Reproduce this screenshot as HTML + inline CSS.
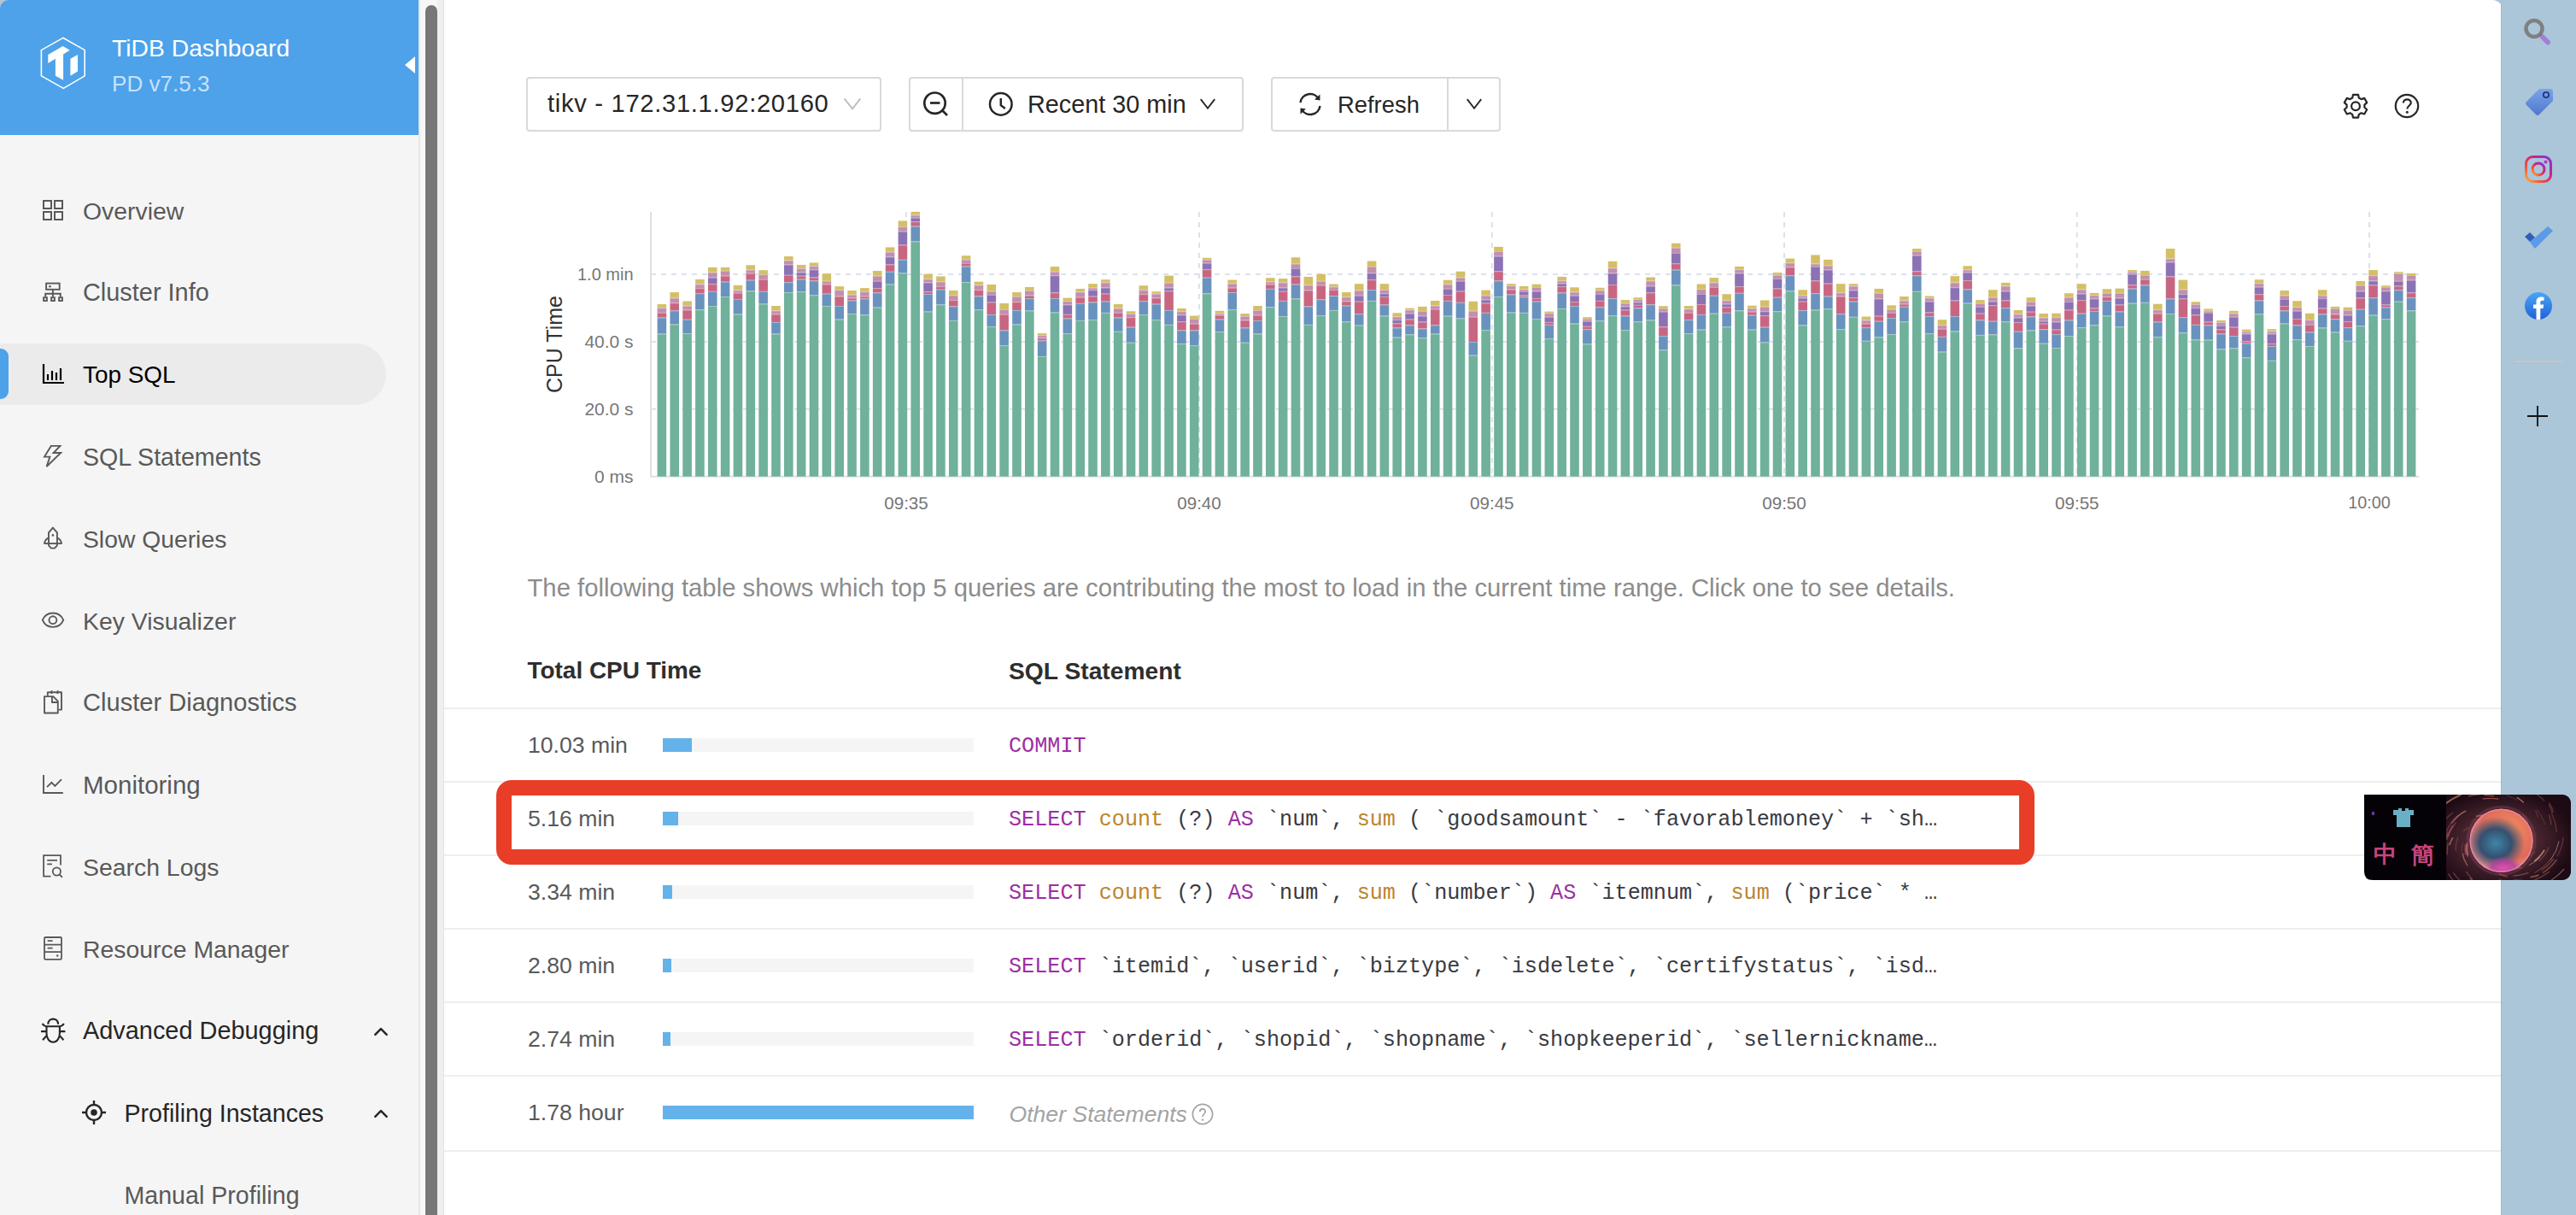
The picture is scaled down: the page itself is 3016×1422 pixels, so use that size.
<!DOCTYPE html><html><head><meta charset="utf-8"><style>
html,body{margin:0;padding:0;}
body{width:3016px;height:1422px;overflow:hidden;position:relative;background:#fff;font-family:'Liberation Sans',sans-serif;}
div{box-sizing:border-box;}
svg{position:absolute;overflow:visible;}
</style></head><body>
<div style="position:absolute;left:0;top:0;width:490px;height:1422px;background:#f5f5f5"></div>
<div style="position:absolute;left:0;top:0;width:490px;height:158px;background:#4da2ea"></div>
<svg style="left:0;top:0" width="12" height="12"><path d="M0 0 H10 A10 10 0 0 0 0 10 Z" fill="#b4c7d6"/></svg>
<div style="position:absolute;left:490px;top:0;width:30px;height:1422px;background:linear-gradient(90deg,#e8e6e4 0,#e8e6e4 1.5px,#f7f7f7 1.5px,#f7f7f7 22px,#efefef 22px,#efefef 29px,#e2e2e2 29px)"></div>
<div style="position:absolute;left:498px;top:6px;width:14px;height:1416px;background:#777;border-radius:7px 7px 0 0"></div>
<div style="position:absolute;left:2928px;top:0;width:88px;height:1422px;background:#abc5d9;border-left:1px solid #9fb8cc"></div>
<svg style="left:2916px;top:0" width="14" height="14"><path d="M2 0 A12 12 0 0 1 14 12 V0 Z" fill="#abc5d9"/></svg>
<svg style="left:0;top:0" width="120" height="120" viewBox="0 0 120 120">
<path d="M73.8 44.3 L99.2 58.6 V88.9 L74.3 103.4 L48.4 88.9 V58.6 Z" fill="none" stroke="#fff" stroke-width="1.6"/>
<path d="M56.3 64.1 L73.6 54 L81.8 58.7 L74.1 63.5 L74.1 93.7 L64.9 88.7 L64.9 68.8 L56.3 73.9 Z" fill="#fff"/>
<path d="M82.4 68.8 L91 64.1 L91 83.6 L82.4 88.7 Z" fill="#fff"/>
</svg>
<div style="position:absolute;left:131.0px;top:42.2px;font-family:'Liberation Sans', sans-serif;font-size:28.3px;line-height:1;color:#fff;font-weight:400;white-space:pre;">TiDB Dashboard</div>
<div style="position:absolute;left:131.0px;top:84.8px;font-family:'Liberation Sans', sans-serif;font-size:26.1px;line-height:1;color:rgba(255,255,255,0.7);font-weight:400;white-space:pre;">PD v7.5.3</div>
<svg style="left:472px;top:65px" width="16" height="22"><path d="M2 11 L14 1 V21 Z" fill="#fff"/></svg>
<div style="position:absolute;left:0;top:402px;width:452px;height:72px;background:#ebebeb;border-radius:0 36px 36px 0"></div>
<div style="position:absolute;left:0;top:408px;width:10px;height:59px;background:#4da2ea;border-radius:0 9px 9px 0"></div>
<div style="position:absolute;left:97.0px;top:232.7px;font-family:'Liberation Sans', sans-serif;font-size:28.4px;line-height:1;color:#595959;font-weight:400;white-space:pre;">Overview</div>
<div style="position:absolute;left:97.0px;top:328.2px;font-family:'Liberation Sans', sans-serif;font-size:28.9px;line-height:1;color:#595959;font-weight:400;white-space:pre;">Cluster Info</div>
<div style="position:absolute;left:97.0px;top:425.1px;font-family:'Liberation Sans', sans-serif;font-size:27.9px;line-height:1;color:#000;font-weight:400;white-space:pre;">Top SQL</div>
<div style="position:absolute;left:97.0px;top:520.5px;font-family:'Liberation Sans', sans-serif;font-size:28.6px;line-height:1;color:#595959;font-weight:400;white-space:pre;">SQL Statements</div>
<div style="position:absolute;left:97.0px;top:616.7px;font-family:'Liberation Sans', sans-serif;font-size:28.3px;line-height:1;color:#595959;font-weight:400;white-space:pre;">Slow Queries</div>
<div style="position:absolute;left:97.0px;top:712.7px;font-family:'Liberation Sans', sans-serif;font-size:28.4px;line-height:1;color:#595959;font-weight:400;white-space:pre;">Key Visualizer</div>
<div style="position:absolute;left:97.0px;top:808.1px;font-family:'Liberation Sans', sans-serif;font-size:29.1px;line-height:1;color:#595959;font-weight:400;white-space:pre;">Cluster Diagnostics</div>
<div style="position:absolute;left:97.0px;top:903.7px;font-family:'Liberation Sans', sans-serif;font-size:29.5px;line-height:1;color:#595959;font-weight:400;white-space:pre;">Monitoring</div>
<div style="position:absolute;left:97.0px;top:1000.7px;font-family:'Liberation Sans', sans-serif;font-size:28.4px;line-height:1;color:#595959;font-weight:400;white-space:pre;">Search Logs</div>
<div style="position:absolute;left:97.0px;top:1096.7px;font-family:'Liberation Sans', sans-serif;font-size:28.4px;line-height:1;color:#595959;font-weight:400;white-space:pre;">Resource Manager</div>
<div style="position:absolute;left:97.0px;top:1192.2px;font-family:'Liberation Sans', sans-serif;font-size:28.9px;line-height:1;color:#262626;font-weight:400;white-space:pre;">Advanced Debugging</div>
<div style="position:absolute;left:145.5px;top:1288.5px;font-family:'Liberation Sans', sans-serif;font-size:28.6px;line-height:1;color:#262626;font-weight:400;white-space:pre;">Profiling Instances</div>
<div style="position:absolute;left:145.5px;top:1384.5px;font-family:'Liberation Sans', sans-serif;font-size:28.6px;line-height:1;color:#595959;font-weight:400;white-space:pre;">Manual Profiling</div>
<svg style="left:436px;top:1200px" width="20" height="14"><path d="M3.3 10.8 L10 4.1 L16.7 10.8" fill="none" stroke="#262626" stroke-width="2.5" stroke-linecap="round" stroke-linejoin="round"/></svg>
<svg style="left:436px;top:1296px" width="20" height="14"><path d="M3.3 10.8 L10 4.1 L16.7 10.8" fill="none" stroke="#262626" stroke-width="2.5" stroke-linecap="round" stroke-linejoin="round"/></svg>
<svg style="left:50px;top:234px" width="24" height="24" viewBox="0 0 24 24"><g fill="none" stroke="#595959" stroke-width="2"><rect x="1" y="1" width="9" height="9"/><rect x="14" y="1" width="9" height="9"/><rect x="1" y="14" width="9" height="9"/><rect x="14" y="14" width="9" height="9"/></g></svg>
<svg style="left:0;top:0" width="100" height="400"><g fill="none" stroke="#595959" stroke-width="1.9"><rect x="54.1" y="331.6" width="15.6" height="7.2"/><path d="M61.9 338.8 V347.5 M53.2 347.5 V343.7 H70.8 V347.5"/><rect x="51.1" y="348.2" width="3.8" height="3.8"/><rect x="60.1" y="348.2" width="3.8" height="3.8"/><rect x="69.1" y="348.2" width="3.8" height="3.8"/></g><circle cx="58.5" cy="335.3" r="1.3" fill="#595959"/></svg>
<svg style="left:50px;top:426px" width="25" height="24" viewBox="0 0 25 24"><g fill="none" stroke="#000" stroke-width="2.2"><path d="M1 0 V22 H25"/><path d="M6 12 V19 M11 8 V19 M16 10 V19 M21 5 V19"/></g></svg>
<svg style="left:0;top:0" width="100" height="600"><path d="M59.8 521.9 H70.4 L62.6 530 H71.2 L54.6 546 L58.4 534.6 H52 Z" fill="none" stroke="#595959" stroke-width="1.9" stroke-linejoin="miter"/></svg>
<svg style="left:0;top:0" width="100" height="700"><g fill="none" stroke="#595959" stroke-width="1.9" stroke-linejoin="round"><path d="M57 636 V623.4 L61.9 617.6 L66.9 623.4 V636"/><path d="M51.4 636.1 H72.6"/><path d="M51.8 636 Q53 631.2 57 629.4 M72.2 636 Q71 631.2 66.9 629.4"/><path d="M57.1 636.5 V638.6 L60 641.6 H63.9 L66.8 638.6 V636.5"/></g><circle cx="61.9" cy="626.4" r="1.3" fill="#595959"/></svg>
<svg style="left:0;top:0" width="100" height="800"><g fill="none" stroke="#595959" stroke-width="1.9"><path d="M49.8 725.7 C54.2 714.8 69.8 714.8 74.2 725.7 C69.8 736.6 54.2 736.6 49.8 725.7 Z"/><circle cx="61.9" cy="725.7" r="4.4"/></g></svg>
<svg style="left:0;top:0" width="100" height="900"><g fill="none" stroke="#595959" stroke-width="1.9" stroke-linejoin="round"><path d="M55.8 814.6 V810.2 H72 V830.6 H68.5"/><path d="M52 815.1 H62.3 L67.8 820.7 V834.5 H52 Z"/><path d="M60.9 815.1 V822 H67.8"/><path d="M60.7 808.2 L60.1 812 M67.8 808.2 L67.2 812"/></g></svg>
<svg style="left:0;top:0" width="100" height="1000"><g fill="none" stroke="#595959" stroke-width="1.9"><path d="M51 907 V928 H73.8"/><path d="M55 921.2 L60.4 915.8 L64.4 919.8 L72 912.2"/></g></svg>
<svg style="left:0;top:0" width="100" height="1100"><g fill="none" stroke="#595959" stroke-width="1.8"><path d="M59.5 1025.6 H51.1 V1001.1 H71 V1012.6"/><path d="M55.2 1006.8 H67 M55.2 1011.4 H60.9"/><circle cx="66.4" cy="1020" r="4.6"/><path d="M69.6 1023.3 L72.9 1026.9"/></g></svg>
<svg style="left:0;top:0" width="100" height="1200"><g fill="none" stroke="#595959" stroke-width="1.8"><rect x="52" y="1097" width="20" height="25.8" rx="1.3"/><path d="M52 1105.6 H72 M52 1114.2 H72 M55.6 1101.2 H61.6 M55.6 1109.7 H61.6"/></g><circle cx="67.2" cy="1118.5" r="1.2" fill="#595959"/></svg>
<svg style="left:0;top:0" width="100" height="1250"><g fill="none" stroke="#262626" stroke-width="2.1"><path d="M56.3 1198.8 C56.3 1190.5 68.1 1190.5 68.1 1198.8"/><path d="M49.6 1198 Q51.5 1201.3 55.5 1201.3 H68.9 Q72.9 1201.3 74.8 1198"/><path d="M54.5 1201.3 V1209.5 C54.5 1215.5 58 1219.8 62.2 1219.8 C66.4 1219.8 69.9 1215.5 69.9 1209.5 V1201.3"/><path d="M48 1207.1 H54.5 M69.9 1207.1 H76.4 M50 1217.2 L54.2 1212.4 M74.4 1217.2 L70.2 1212.4"/></g></svg>
<svg style="left:96px;top:1288px" width="28" height="28" viewBox="0 0 28 28"><g fill="none" stroke="#262626" stroke-width="2.4"><circle cx="14" cy="14" r="9"/><path d="M14 0 V5 M14 23 V28 M0 14 H5 M23 14 H28"/></g><circle cx="14" cy="14" r="3.8" fill="#262626"/></svg>
<div style="position:absolute;left:616px;top:90px;width:416px;height:64px;border:2px solid #d9d9d9;border-radius:4px;background:#fff"></div>
<div style="position:absolute;left:641.0px;top:107.2px;font-family:'Liberation Sans', sans-serif;font-size:29.2px;line-height:1;color:#262626;font-weight:400;white-space:pre;letter-spacing:0.68px;">tikv - 172.31.1.92:20160</div>
<svg style="left:987px;top:113px" width="22" height="18"><path d="M1.6 2.4 L11 14.4 L20.4 2.4" fill="none" stroke="#bfbfbf" stroke-width="2"/></svg>
<div style="position:absolute;left:1064px;top:90px;width:392px;height:64px;border:2px solid #d9d9d9;border-radius:4px;background:#fff;box-shadow:0 2px 0 rgba(0,0,0,0.016)"></div>
<div style="position:absolute;left:1126px;top:90px;width:2px;height:64px;background:#d9d9d9"></div>
<svg style="left:1078px;top:104px" width="36" height="36"><g fill="none" stroke="#262626" stroke-width="2.7"><circle cx="16.5" cy="16.7" r="12.2"/><path d="M11 16.5 H22.5"/><path d="M25.5 25.5 L31 31"/></g></svg>
<svg style="left:1156px;top:106px" width="32" height="32"><g fill="none" stroke="#262626" stroke-width="2.5"><circle cx="15.8" cy="15.9" r="12.8"/><path d="M15.8 8.9 V17.2 L20.8 21"/></g></svg>
<div style="position:absolute;left:1203.0px;top:107.5px;font-family:'Liberation Sans', sans-serif;font-size:28.8px;line-height:1;color:#262626;font-weight:400;white-space:pre;">Recent 30 min</div>
<svg style="left:1404px;top:114px" width="20" height="18"><path d="M1.8 2.2 L10 12.8 L18.2 2.2" fill="none" stroke="#262626" stroke-width="1.9"/></svg>
<div style="position:absolute;left:1488px;top:90px;width:269px;height:64px;border:2px solid #d9d9d9;border-radius:4px;background:#fff"></div>
<div style="position:absolute;left:1694px;top:90px;width:2px;height:64px;background:#d9d9d9"></div>
<svg style="left:1518px;top:106px" width="32" height="32"><g fill="none" stroke="#262626" stroke-width="2.5"><path d="M4.5 14 A11.5 11.5 0 0 1 26 10"/><path d="M27.5 18 A11.5 11.5 0 0 1 6 22"/></g><path d="M21 10.5 L27.5 11.5 L27.5 4.5 Z" fill="#262626"/><path d="M11 21.5 L4.5 20.5 L4.5 27.5 Z" fill="#262626"/></svg>
<div style="position:absolute;left:1566.0px;top:108.7px;font-family:'Liberation Sans', sans-serif;font-size:27.4px;line-height:1;color:#262626;font-weight:400;white-space:pre;">Refresh</div>
<svg style="left:1716px;top:114px" width="20" height="18"><path d="M1.8 2.2 L10 12.8 L18.2 2.2" fill="none" stroke="#262626" stroke-width="1.9"/></svg>
<svg style="left:2742px;top:108px" width="32" height="32" viewBox="0 0 32 32"><g fill="none" stroke="#262626" stroke-width="2.2" stroke-linejoin="round">
<path d="M13 2.8 H19 L19.8 6.5 L22.6 8.1 L26.2 6.9 L29.2 12.1 L26.4 14.6 V17.8 L29.2 20.3 L26.2 25.5 L22.6 24.3 L19.8 25.9 L19 29.6 H13 L12.2 25.9 L9.4 24.3 L5.8 25.5 L2.8 20.3 L5.6 17.8 V14.6 L2.8 12.1 L5.8 6.9 L9.4 8.1 L12.2 6.5 Z"/>
<circle cx="16" cy="16.2" r="4.9"/></g></svg>
<svg style="left:2803px;top:109px" width="30" height="30" viewBox="0 0 30 30"><g fill="none" stroke="#262626" stroke-width="2.2">
<circle cx="15" cy="15" r="13.2"/><path d="M10.8 11.5 C10.8 6 19.8 6 19.8 11.3 C19.8 14.5 15.3 15 15.3 18.5"/></g><circle cx="15.3" cy="22.2" r="1.5" fill="#262626"/></svg>
<svg style="left:0;top:0" width="3016" height="620" viewBox="0 0 3016 620"><line x1="762" y1="478.8" x2="2832" y2="478.8" stroke="#dde1ec" stroke-width="2" stroke-dasharray="6 6"/><line x1="762" y1="399.9" x2="2832" y2="399.9" stroke="#dde1ec" stroke-width="2" stroke-dasharray="6 6"/><line x1="762" y1="321.0" x2="2832" y2="321.0" stroke="#dde1ec" stroke-width="2" stroke-dasharray="6 6"/><line x1="1061" y1="248" x2="1061" y2="557.7" stroke="#dde1ec" stroke-width="2" stroke-dasharray="6 6"/><line x1="1404" y1="248" x2="1404" y2="557.7" stroke="#dde1ec" stroke-width="2" stroke-dasharray="6 6"/><line x1="1746.8" y1="248" x2="1746.8" y2="557.7" stroke="#dde1ec" stroke-width="2" stroke-dasharray="6 6"/><line x1="2089" y1="248" x2="2089" y2="557.7" stroke="#dde1ec" stroke-width="2" stroke-dasharray="6 6"/><line x1="2431.8" y1="248" x2="2431.8" y2="557.7" stroke="#dde1ec" stroke-width="2" stroke-dasharray="6 6"/><line x1="2774" y1="248" x2="2774" y2="557.7" stroke="#dde1ec" stroke-width="2" stroke-dasharray="6 6"/><line x1="762" y1="248" x2="762" y2="558.7" stroke="#e0e0e0" stroke-width="2"/><line x1="762" y1="557.7" x2="2832" y2="557.7" stroke="#e0e0e0" stroke-width="2"/><rect x="769.60" y="390.62" width="10.6" height="167.08" fill="#6fb19a"/><rect x="769.60" y="371.69" width="10.6" height="18.93" fill="#6a92be"/><rect x="769.60" y="365.93" width="10.6" height="5.76" fill="#c86682"/><rect x="769.60" y="360.16" width="10.6" height="5.76" fill="#c28fad"/><rect x="769.60" y="356.05" width="10.6" height="4.12" fill="#d3c066"/><rect x="769.60" y="390.62" width="10.6" height="1" fill="rgba(255,255,255,0.35)"/><rect x="769.60" y="371.69" width="10.6" height="1" fill="rgba(255,255,255,0.35)"/><rect x="769.60" y="365.93" width="10.6" height="1" fill="rgba(255,255,255,0.35)"/><rect x="769.60" y="360.16" width="10.6" height="1" fill="rgba(255,255,255,0.35)"/><rect x="784.44" y="379.59" width="10.6" height="178.11" fill="#6fb19a"/><rect x="784.44" y="363.46" width="10.6" height="16.13" fill="#6a92be"/><rect x="784.44" y="354.40" width="10.6" height="9.05" fill="#c86682"/><rect x="784.44" y="348.64" width="10.6" height="5.76" fill="#c28fad"/><rect x="784.44" y="342.06" width="10.6" height="6.58" fill="#d3c066"/><rect x="784.44" y="379.59" width="10.6" height="1" fill="rgba(255,255,255,0.35)"/><rect x="784.44" y="363.46" width="10.6" height="1" fill="rgba(255,255,255,0.35)"/><rect x="784.44" y="354.40" width="10.6" height="1" fill="rgba(255,255,255,0.35)"/><rect x="784.44" y="348.64" width="10.6" height="1" fill="rgba(255,255,255,0.35)"/><rect x="799.28" y="390.12" width="10.6" height="167.58" fill="#6fb19a"/><rect x="799.28" y="373.83" width="10.6" height="16.30" fill="#6a92be"/><rect x="799.28" y="362.63" width="10.6" height="11.19" fill="#c86682"/><rect x="799.28" y="357.70" width="10.6" height="4.94" fill="#c28fad"/><rect x="799.28" y="352.43" width="10.6" height="5.27" fill="#d3c066"/><rect x="799.28" y="390.12" width="10.6" height="1" fill="rgba(255,255,255,0.35)"/><rect x="799.28" y="373.83" width="10.6" height="1" fill="rgba(255,255,255,0.35)"/><rect x="799.28" y="362.63" width="10.6" height="1" fill="rgba(255,255,255,0.35)"/><rect x="799.28" y="357.70" width="10.6" height="1" fill="rgba(255,255,255,0.35)"/><rect x="814.13" y="362.30" width="10.6" height="195.40" fill="#6fb19a"/><rect x="814.13" y="343.21" width="10.6" height="19.09" fill="#6a92be"/><rect x="814.13" y="337.12" width="10.6" height="6.09" fill="#c86682"/><rect x="814.13" y="332.51" width="10.6" height="4.61" fill="#c28fad"/><rect x="814.13" y="326.91" width="10.6" height="5.60" fill="#d3c066"/><rect x="814.13" y="362.30" width="10.6" height="1" fill="rgba(255,255,255,0.35)"/><rect x="814.13" y="343.21" width="10.6" height="1" fill="rgba(255,255,255,0.35)"/><rect x="814.13" y="337.12" width="10.6" height="1" fill="rgba(255,255,255,0.35)"/><rect x="814.13" y="332.51" width="10.6" height="1" fill="rgba(255,255,255,0.35)"/><rect x="828.97" y="358.02" width="10.6" height="199.68" fill="#6fb19a"/><rect x="828.97" y="340.91" width="10.6" height="17.12" fill="#6a92be"/><rect x="828.97" y="332.18" width="10.6" height="8.72" fill="#c86682"/><rect x="828.97" y="324.77" width="10.6" height="7.41" fill="#8b72b4"/><rect x="828.97" y="318.52" width="10.6" height="6.26" fill="#c28fad"/><rect x="828.97" y="312.92" width="10.6" height="5.60" fill="#d3c066"/><rect x="828.97" y="358.02" width="10.6" height="1" fill="rgba(255,255,255,0.35)"/><rect x="828.97" y="340.91" width="10.6" height="1" fill="rgba(255,255,255,0.35)"/><rect x="828.97" y="332.18" width="10.6" height="1" fill="rgba(255,255,255,0.35)"/><rect x="828.97" y="324.77" width="10.6" height="1" fill="rgba(255,255,255,0.35)"/><rect x="828.97" y="318.52" width="10.6" height="1" fill="rgba(255,255,255,0.35)"/><rect x="843.81" y="347.00" width="10.6" height="210.70" fill="#6fb19a"/><rect x="843.81" y="329.71" width="10.6" height="17.28" fill="#6a92be"/><rect x="843.81" y="322.80" width="10.6" height="6.91" fill="#c86682"/><rect x="843.81" y="316.87" width="10.6" height="5.93" fill="#c28fad"/><rect x="843.81" y="312.92" width="10.6" height="3.95" fill="#d3c066"/><rect x="843.81" y="347.00" width="10.6" height="1" fill="rgba(255,255,255,0.35)"/><rect x="843.81" y="329.71" width="10.6" height="1" fill="rgba(255,255,255,0.35)"/><rect x="843.81" y="322.80" width="10.6" height="1" fill="rgba(255,255,255,0.35)"/><rect x="843.81" y="316.87" width="10.6" height="1" fill="rgba(255,255,255,0.35)"/><rect x="858.65" y="367.57" width="10.6" height="190.13" fill="#6fb19a"/><rect x="858.65" y="349.96" width="10.6" height="17.61" fill="#6a92be"/><rect x="858.65" y="342.88" width="10.6" height="7.08" fill="#c86682"/><rect x="858.65" y="339.59" width="10.6" height="3.29" fill="#c28fad"/><rect x="858.65" y="333.83" width="10.6" height="5.76" fill="#d3c066"/><rect x="858.65" y="367.57" width="10.6" height="1" fill="rgba(255,255,255,0.35)"/><rect x="858.65" y="349.96" width="10.6" height="1" fill="rgba(255,255,255,0.35)"/><rect x="858.65" y="342.88" width="10.6" height="1" fill="rgba(255,255,255,0.35)"/><rect x="858.65" y="339.59" width="10.6" height="1" fill="rgba(255,255,255,0.35)"/><rect x="873.49" y="340.41" width="10.6" height="217.29" fill="#6fb19a"/><rect x="873.49" y="327.74" width="10.6" height="12.67" fill="#6a92be"/><rect x="873.49" y="319.84" width="10.6" height="7.90" fill="#c86682"/><rect x="873.49" y="315.72" width="10.6" height="4.12" fill="#c28fad"/><rect x="873.49" y="310.29" width="10.6" height="5.43" fill="#d3c066"/><rect x="873.49" y="340.41" width="10.6" height="1" fill="rgba(255,255,255,0.35)"/><rect x="873.49" y="327.74" width="10.6" height="1" fill="rgba(255,255,255,0.35)"/><rect x="873.49" y="319.84" width="10.6" height="1" fill="rgba(255,255,255,0.35)"/><rect x="873.49" y="315.72" width="10.6" height="1" fill="rgba(255,255,255,0.35)"/><rect x="888.34" y="355.56" width="10.6" height="202.14" fill="#6fb19a"/><rect x="888.34" y="340.91" width="10.6" height="14.65" fill="#6a92be"/><rect x="888.34" y="326.91" width="10.6" height="13.99" fill="#c86682"/><rect x="888.34" y="321.15" width="10.6" height="5.76" fill="#c28fad"/><rect x="888.34" y="316.21" width="10.6" height="4.94" fill="#d3c066"/><rect x="888.34" y="355.56" width="10.6" height="1" fill="rgba(255,255,255,0.35)"/><rect x="888.34" y="340.91" width="10.6" height="1" fill="rgba(255,255,255,0.35)"/><rect x="888.34" y="326.91" width="10.6" height="1" fill="rgba(255,255,255,0.35)"/><rect x="888.34" y="321.15" width="10.6" height="1" fill="rgba(255,255,255,0.35)"/><rect x="903.18" y="390.62" width="10.6" height="167.08" fill="#6fb19a"/><rect x="903.18" y="376.95" width="10.6" height="13.66" fill="#6a92be"/><rect x="903.18" y="367.57" width="10.6" height="9.38" fill="#c86682"/><rect x="903.18" y="363.46" width="10.6" height="4.12" fill="#c28fad"/><rect x="903.18" y="358.02" width="10.6" height="5.43" fill="#d3c066"/><rect x="903.18" y="390.62" width="10.6" height="1" fill="rgba(255,255,255,0.35)"/><rect x="903.18" y="376.95" width="10.6" height="1" fill="rgba(255,255,255,0.35)"/><rect x="903.18" y="367.57" width="10.6" height="1" fill="rgba(255,255,255,0.35)"/><rect x="903.18" y="363.46" width="10.6" height="1" fill="rgba(255,255,255,0.35)"/><rect x="918.02" y="342.06" width="10.6" height="215.64" fill="#6fb19a"/><rect x="918.02" y="330.21" width="10.6" height="11.85" fill="#6a92be"/><rect x="918.02" y="321.81" width="10.6" height="8.40" fill="#c86682"/><rect x="918.02" y="309.63" width="10.6" height="12.18" fill="#8b72b4"/><rect x="918.02" y="304.69" width="10.6" height="4.94" fill="#c28fad"/><rect x="918.02" y="300.08" width="10.6" height="4.61" fill="#d3c066"/><rect x="918.02" y="342.06" width="10.6" height="1" fill="rgba(255,255,255,0.35)"/><rect x="918.02" y="330.21" width="10.6" height="1" fill="rgba(255,255,255,0.35)"/><rect x="918.02" y="321.81" width="10.6" height="1" fill="rgba(255,255,255,0.35)"/><rect x="918.02" y="309.63" width="10.6" height="1" fill="rgba(255,255,255,0.35)"/><rect x="918.02" y="304.69" width="10.6" height="1" fill="rgba(255,255,255,0.35)"/><rect x="932.86" y="341.23" width="10.6" height="216.47" fill="#6fb19a"/><rect x="932.86" y="326.75" width="10.6" height="14.49" fill="#6a92be"/><rect x="932.86" y="322.80" width="10.6" height="3.95" fill="#c86682"/><rect x="932.86" y="318.52" width="10.6" height="4.28" fill="#8b72b4"/><rect x="932.86" y="314.07" width="10.6" height="4.44" fill="#c28fad"/><rect x="932.86" y="309.96" width="10.6" height="4.12" fill="#d3c066"/><rect x="932.86" y="341.23" width="10.6" height="1" fill="rgba(255,255,255,0.35)"/><rect x="932.86" y="326.75" width="10.6" height="1" fill="rgba(255,255,255,0.35)"/><rect x="932.86" y="322.80" width="10.6" height="1" fill="rgba(255,255,255,0.35)"/><rect x="932.86" y="318.52" width="10.6" height="1" fill="rgba(255,255,255,0.35)"/><rect x="932.86" y="314.07" width="10.6" height="1" fill="rgba(255,255,255,0.35)"/><rect x="947.70" y="345.35" width="10.6" height="212.35" fill="#6fb19a"/><rect x="947.70" y="328.40" width="10.6" height="16.95" fill="#6a92be"/><rect x="947.70" y="324.44" width="10.6" height="3.95" fill="#c86682"/><rect x="947.70" y="315.39" width="10.6" height="9.05" fill="#8b72b4"/><rect x="947.70" y="311.28" width="10.6" height="4.12" fill="#c28fad"/><rect x="947.70" y="307.49" width="10.6" height="3.79" fill="#d3c066"/><rect x="947.70" y="345.35" width="10.6" height="1" fill="rgba(255,255,255,0.35)"/><rect x="947.70" y="328.40" width="10.6" height="1" fill="rgba(255,255,255,0.35)"/><rect x="947.70" y="324.44" width="10.6" height="1" fill="rgba(255,255,255,0.35)"/><rect x="947.70" y="315.39" width="10.6" height="1" fill="rgba(255,255,255,0.35)"/><rect x="947.70" y="311.28" width="10.6" height="1" fill="rgba(255,255,255,0.35)"/><rect x="962.55" y="358.02" width="10.6" height="199.68" fill="#6fb19a"/><rect x="962.55" y="343.70" width="10.6" height="14.32" fill="#6a92be"/><rect x="962.55" y="332.51" width="10.6" height="11.19" fill="#c86682"/><rect x="962.55" y="328.89" width="10.6" height="3.62" fill="#c28fad"/><rect x="962.55" y="320.16" width="10.6" height="8.72" fill="#d3c066"/><rect x="962.55" y="358.02" width="10.6" height="1" fill="rgba(255,255,255,0.35)"/><rect x="962.55" y="343.70" width="10.6" height="1" fill="rgba(255,255,255,0.35)"/><rect x="962.55" y="332.51" width="10.6" height="1" fill="rgba(255,255,255,0.35)"/><rect x="962.55" y="328.89" width="10.6" height="1" fill="rgba(255,255,255,0.35)"/><rect x="977.39" y="373.66" width="10.6" height="184.04" fill="#6fb19a"/><rect x="977.39" y="358.02" width="10.6" height="15.64" fill="#6a92be"/><rect x="977.39" y="346.67" width="10.6" height="11.36" fill="#c86682"/><rect x="977.39" y="339.26" width="10.6" height="7.41" fill="#c28fad"/><rect x="977.39" y="335.14" width="10.6" height="4.12" fill="#d3c066"/><rect x="977.39" y="373.66" width="10.6" height="1" fill="rgba(255,255,255,0.35)"/><rect x="977.39" y="358.02" width="10.6" height="1" fill="rgba(255,255,255,0.35)"/><rect x="977.39" y="346.67" width="10.6" height="1" fill="rgba(255,255,255,0.35)"/><rect x="977.39" y="339.26" width="10.6" height="1" fill="rgba(255,255,255,0.35)"/><rect x="992.23" y="367.08" width="10.6" height="190.62" fill="#6fb19a"/><rect x="992.23" y="351.60" width="10.6" height="15.47" fill="#6a92be"/><rect x="992.23" y="348.64" width="10.6" height="2.96" fill="#c86682"/><rect x="992.23" y="344.86" width="10.6" height="3.79" fill="#c28fad"/><rect x="992.23" y="340.08" width="10.6" height="4.77" fill="#d3c066"/><rect x="992.23" y="367.08" width="10.6" height="1" fill="rgba(255,255,255,0.35)"/><rect x="992.23" y="351.60" width="10.6" height="1" fill="rgba(255,255,255,0.35)"/><rect x="992.23" y="348.64" width="10.6" height="1" fill="rgba(255,255,255,0.35)"/><rect x="992.23" y="344.86" width="10.6" height="1" fill="rgba(255,255,255,0.35)"/><rect x="1007.07" y="368.40" width="10.6" height="189.30" fill="#6fb19a"/><rect x="1007.07" y="349.47" width="10.6" height="18.93" fill="#6a92be"/><rect x="1007.07" y="346.67" width="10.6" height="2.80" fill="#c86682"/><rect x="1007.07" y="341.23" width="10.6" height="5.43" fill="#c28fad"/><rect x="1007.07" y="337.12" width="10.6" height="4.12" fill="#d3c066"/><rect x="1007.07" y="368.40" width="10.6" height="1" fill="rgba(255,255,255,0.35)"/><rect x="1007.07" y="349.47" width="10.6" height="1" fill="rgba(255,255,255,0.35)"/><rect x="1007.07" y="346.67" width="10.6" height="1" fill="rgba(255,255,255,0.35)"/><rect x="1007.07" y="341.23" width="10.6" height="1" fill="rgba(255,255,255,0.35)"/><rect x="1021.91" y="359.67" width="10.6" height="198.03" fill="#6fb19a"/><rect x="1021.91" y="342.39" width="10.6" height="17.28" fill="#6a92be"/><rect x="1021.91" y="337.12" width="10.6" height="5.27" fill="#c86682"/><rect x="1021.91" y="328.89" width="10.6" height="8.23" fill="#8b72b4"/><rect x="1021.91" y="322.80" width="10.6" height="6.09" fill="#c28fad"/><rect x="1021.91" y="317.04" width="10.6" height="5.76" fill="#d3c066"/><rect x="1021.91" y="359.67" width="10.6" height="1" fill="rgba(255,255,255,0.35)"/><rect x="1021.91" y="342.39" width="10.6" height="1" fill="rgba(255,255,255,0.35)"/><rect x="1021.91" y="337.12" width="10.6" height="1" fill="rgba(255,255,255,0.35)"/><rect x="1021.91" y="328.89" width="10.6" height="1" fill="rgba(255,255,255,0.35)"/><rect x="1021.91" y="322.80" width="10.6" height="1" fill="rgba(255,255,255,0.35)"/><rect x="1036.76" y="332.67" width="10.6" height="225.03" fill="#6fb19a"/><rect x="1036.76" y="317.86" width="10.6" height="14.81" fill="#6a92be"/><rect x="1036.76" y="309.47" width="10.6" height="8.40" fill="#c86682"/><rect x="1036.76" y="300.41" width="10.6" height="9.05" fill="#8b72b4"/><rect x="1036.76" y="294.81" width="10.6" height="5.60" fill="#c28fad"/><rect x="1036.76" y="289.38" width="10.6" height="5.43" fill="#d3c066"/><rect x="1036.76" y="332.67" width="10.6" height="1" fill="rgba(255,255,255,0.35)"/><rect x="1036.76" y="317.86" width="10.6" height="1" fill="rgba(255,255,255,0.35)"/><rect x="1036.76" y="309.47" width="10.6" height="1" fill="rgba(255,255,255,0.35)"/><rect x="1036.76" y="300.41" width="10.6" height="1" fill="rgba(255,255,255,0.35)"/><rect x="1036.76" y="294.81" width="10.6" height="1" fill="rgba(255,255,255,0.35)"/><rect x="1051.60" y="319.51" width="10.6" height="238.19" fill="#6fb19a"/><rect x="1051.60" y="303.87" width="10.6" height="15.64" fill="#6a92be"/><rect x="1051.60" y="286.58" width="10.6" height="17.28" fill="#c86682"/><rect x="1051.60" y="270.78" width="10.6" height="15.80" fill="#8b72b4"/><rect x="1051.60" y="265.19" width="10.6" height="5.60" fill="#c28fad"/><rect x="1051.60" y="258.44" width="10.6" height="6.75" fill="#d3c066"/><rect x="1051.60" y="319.51" width="10.6" height="1" fill="rgba(255,255,255,0.35)"/><rect x="1051.60" y="303.87" width="10.6" height="1" fill="rgba(255,255,255,0.35)"/><rect x="1051.60" y="286.58" width="10.6" height="1" fill="rgba(255,255,255,0.35)"/><rect x="1051.60" y="270.78" width="10.6" height="1" fill="rgba(255,255,255,0.35)"/><rect x="1051.60" y="265.19" width="10.6" height="1" fill="rgba(255,255,255,0.35)"/><rect x="1066.44" y="282.47" width="10.6" height="275.23" fill="#6fb19a"/><rect x="1066.44" y="264.69" width="10.6" height="17.78" fill="#6a92be"/><rect x="1066.44" y="259.26" width="10.6" height="5.43" fill="#c86682"/><rect x="1066.44" y="254.81" width="10.6" height="4.44" fill="#8b72b4"/><rect x="1066.44" y="251.52" width="10.6" height="3.29" fill="#c28fad"/><rect x="1066.44" y="247.90" width="10.6" height="3.62" fill="#d3c066"/><rect x="1066.44" y="282.47" width="10.6" height="1" fill="rgba(255,255,255,0.35)"/><rect x="1066.44" y="264.69" width="10.6" height="1" fill="rgba(255,255,255,0.35)"/><rect x="1066.44" y="259.26" width="10.6" height="1" fill="rgba(255,255,255,0.35)"/><rect x="1066.44" y="254.81" width="10.6" height="1" fill="rgba(255,255,255,0.35)"/><rect x="1066.44" y="251.52" width="10.6" height="1" fill="rgba(255,255,255,0.35)"/><rect x="1081.28" y="364.61" width="10.6" height="193.09" fill="#6fb19a"/><rect x="1081.28" y="344.03" width="10.6" height="20.58" fill="#6a92be"/><rect x="1081.28" y="341.23" width="10.6" height="2.80" fill="#c86682"/><rect x="1081.28" y="330.53" width="10.6" height="10.70" fill="#8b72b4"/><rect x="1081.28" y="326.42" width="10.6" height="4.12" fill="#c28fad"/><rect x="1081.28" y="320.66" width="10.6" height="5.76" fill="#d3c066"/><rect x="1081.28" y="364.61" width="10.6" height="1" fill="rgba(255,255,255,0.35)"/><rect x="1081.28" y="344.03" width="10.6" height="1" fill="rgba(255,255,255,0.35)"/><rect x="1081.28" y="341.23" width="10.6" height="1" fill="rgba(255,255,255,0.35)"/><rect x="1081.28" y="330.53" width="10.6" height="1" fill="rgba(255,255,255,0.35)"/><rect x="1081.28" y="326.42" width="10.6" height="1" fill="rgba(255,255,255,0.35)"/><rect x="1096.12" y="356.38" width="10.6" height="201.32" fill="#6fb19a"/><rect x="1096.12" y="338.77" width="10.6" height="17.61" fill="#6a92be"/><rect x="1096.12" y="335.14" width="10.6" height="3.62" fill="#c86682"/><rect x="1096.12" y="329.38" width="10.6" height="5.76" fill="#c28fad"/><rect x="1096.12" y="323.46" width="10.6" height="5.93" fill="#d3c066"/><rect x="1096.12" y="356.38" width="10.6" height="1" fill="rgba(255,255,255,0.35)"/><rect x="1096.12" y="338.77" width="10.6" height="1" fill="rgba(255,255,255,0.35)"/><rect x="1096.12" y="335.14" width="10.6" height="1" fill="rgba(255,255,255,0.35)"/><rect x="1096.12" y="329.38" width="10.6" height="1" fill="rgba(255,255,255,0.35)"/><rect x="1110.97" y="374.98" width="10.6" height="182.72" fill="#6fb19a"/><rect x="1110.97" y="358.52" width="10.6" height="16.46" fill="#6a92be"/><rect x="1110.97" y="351.11" width="10.6" height="7.41" fill="#c86682"/><rect x="1110.97" y="345.35" width="10.6" height="5.76" fill="#c28fad"/><rect x="1110.97" y="339.92" width="10.6" height="5.43" fill="#d3c066"/><rect x="1110.97" y="374.98" width="10.6" height="1" fill="rgba(255,255,255,0.35)"/><rect x="1110.97" y="358.52" width="10.6" height="1" fill="rgba(255,255,255,0.35)"/><rect x="1110.97" y="351.11" width="10.6" height="1" fill="rgba(255,255,255,0.35)"/><rect x="1110.97" y="345.35" width="10.6" height="1" fill="rgba(255,255,255,0.35)"/><rect x="1125.81" y="330.21" width="10.6" height="227.49" fill="#6fb19a"/><rect x="1125.81" y="311.60" width="10.6" height="18.60" fill="#6a92be"/><rect x="1125.81" y="307.98" width="10.6" height="3.62" fill="#c86682"/><rect x="1125.81" y="303.87" width="10.6" height="4.12" fill="#c28fad"/><rect x="1125.81" y="299.26" width="10.6" height="4.61" fill="#d3c066"/><rect x="1125.81" y="330.21" width="10.6" height="1" fill="rgba(255,255,255,0.35)"/><rect x="1125.81" y="311.60" width="10.6" height="1" fill="rgba(255,255,255,0.35)"/><rect x="1125.81" y="307.98" width="10.6" height="1" fill="rgba(255,255,255,0.35)"/><rect x="1125.81" y="303.87" width="10.6" height="1" fill="rgba(255,255,255,0.35)"/><rect x="1140.65" y="362.30" width="10.6" height="195.40" fill="#6fb19a"/><rect x="1140.65" y="346.50" width="10.6" height="15.80" fill="#6a92be"/><rect x="1140.65" y="339.26" width="10.6" height="7.24" fill="#c86682"/><rect x="1140.65" y="333.50" width="10.6" height="5.76" fill="#c28fad"/><rect x="1140.65" y="329.71" width="10.6" height="3.79" fill="#d3c066"/><rect x="1140.65" y="362.30" width="10.6" height="1" fill="rgba(255,255,255,0.35)"/><rect x="1140.65" y="346.50" width="10.6" height="1" fill="rgba(255,255,255,0.35)"/><rect x="1140.65" y="339.26" width="10.6" height="1" fill="rgba(255,255,255,0.35)"/><rect x="1140.65" y="333.50" width="10.6" height="1" fill="rgba(255,255,255,0.35)"/><rect x="1155.49" y="382.06" width="10.6" height="175.64" fill="#6fb19a"/><rect x="1155.49" y="368.07" width="10.6" height="13.99" fill="#6a92be"/><rect x="1155.49" y="353.58" width="10.6" height="14.49" fill="#c86682"/><rect x="1155.49" y="345.02" width="10.6" height="8.56" fill="#8b72b4"/><rect x="1155.49" y="340.74" width="10.6" height="4.28" fill="#c28fad"/><rect x="1155.49" y="333.00" width="10.6" height="7.74" fill="#d3c066"/><rect x="1155.49" y="382.06" width="10.6" height="1" fill="rgba(255,255,255,0.35)"/><rect x="1155.49" y="368.07" width="10.6" height="1" fill="rgba(255,255,255,0.35)"/><rect x="1155.49" y="353.58" width="10.6" height="1" fill="rgba(255,255,255,0.35)"/><rect x="1155.49" y="345.02" width="10.6" height="1" fill="rgba(255,255,255,0.35)"/><rect x="1155.49" y="340.74" width="10.6" height="1" fill="rgba(255,255,255,0.35)"/><rect x="1170.33" y="404.12" width="10.6" height="153.58" fill="#6fb19a"/><rect x="1170.33" y="386.50" width="10.6" height="17.61" fill="#6a92be"/><rect x="1170.33" y="367.90" width="10.6" height="18.60" fill="#c86682"/><rect x="1170.33" y="362.14" width="10.6" height="5.76" fill="#c28fad"/><rect x="1170.33" y="354.90" width="10.6" height="7.24" fill="#d3c066"/><rect x="1170.33" y="404.12" width="10.6" height="1" fill="rgba(255,255,255,0.35)"/><rect x="1170.33" y="386.50" width="10.6" height="1" fill="rgba(255,255,255,0.35)"/><rect x="1170.33" y="367.90" width="10.6" height="1" fill="rgba(255,255,255,0.35)"/><rect x="1170.33" y="362.14" width="10.6" height="1" fill="rgba(255,255,255,0.35)"/><rect x="1185.18" y="379.59" width="10.6" height="178.11" fill="#6fb19a"/><rect x="1185.18" y="362.96" width="10.6" height="16.63" fill="#6a92be"/><rect x="1185.18" y="353.25" width="10.6" height="9.71" fill="#c86682"/><rect x="1185.18" y="347.00" width="10.6" height="6.26" fill="#c28fad"/><rect x="1185.18" y="342.06" width="10.6" height="4.94" fill="#d3c066"/><rect x="1185.18" y="379.59" width="10.6" height="1" fill="rgba(255,255,255,0.35)"/><rect x="1185.18" y="362.96" width="10.6" height="1" fill="rgba(255,255,255,0.35)"/><rect x="1185.18" y="353.25" width="10.6" height="1" fill="rgba(255,255,255,0.35)"/><rect x="1185.18" y="347.00" width="10.6" height="1" fill="rgba(255,255,255,0.35)"/><rect x="1200.02" y="363.46" width="10.6" height="194.24" fill="#6fb19a"/><rect x="1200.02" y="349.14" width="10.6" height="14.32" fill="#6a92be"/><rect x="1200.02" y="345.68" width="10.6" height="3.46" fill="#c86682"/><rect x="1200.02" y="339.92" width="10.6" height="5.76" fill="#c28fad"/><rect x="1200.02" y="335.97" width="10.6" height="3.95" fill="#d3c066"/><rect x="1200.02" y="363.46" width="10.6" height="1" fill="rgba(255,255,255,0.35)"/><rect x="1200.02" y="349.14" width="10.6" height="1" fill="rgba(255,255,255,0.35)"/><rect x="1200.02" y="345.68" width="10.6" height="1" fill="rgba(255,255,255,0.35)"/><rect x="1200.02" y="339.92" width="10.6" height="1" fill="rgba(255,255,255,0.35)"/><rect x="1214.86" y="416.95" width="10.6" height="140.75" fill="#6fb19a"/><rect x="1214.86" y="398.52" width="10.6" height="18.44" fill="#6a92be"/><rect x="1214.86" y="395.56" width="10.6" height="2.96" fill="#c86682"/><rect x="1214.86" y="392.26" width="10.6" height="3.29" fill="#c28fad"/><rect x="1214.86" y="390.12" width="10.6" height="2.14" fill="#d3c066"/><rect x="1214.86" y="416.95" width="10.6" height="1" fill="rgba(255,255,255,0.35)"/><rect x="1214.86" y="398.52" width="10.6" height="1" fill="rgba(255,255,255,0.35)"/><rect x="1214.86" y="395.56" width="10.6" height="1" fill="rgba(255,255,255,0.35)"/><rect x="1214.86" y="392.26" width="10.6" height="1" fill="rgba(255,255,255,0.35)"/><rect x="1229.70" y="365.60" width="10.6" height="192.10" fill="#6fb19a"/><rect x="1229.70" y="348.97" width="10.6" height="16.63" fill="#6a92be"/><rect x="1229.70" y="342.39" width="10.6" height="6.58" fill="#c86682"/><rect x="1229.70" y="322.30" width="10.6" height="20.08" fill="#8b72b4"/><rect x="1229.70" y="317.86" width="10.6" height="4.44" fill="#c28fad"/><rect x="1229.70" y="312.10" width="10.6" height="5.76" fill="#d3c066"/><rect x="1229.70" y="365.60" width="10.6" height="1" fill="rgba(255,255,255,0.35)"/><rect x="1229.70" y="348.97" width="10.6" height="1" fill="rgba(255,255,255,0.35)"/><rect x="1229.70" y="342.39" width="10.6" height="1" fill="rgba(255,255,255,0.35)"/><rect x="1229.70" y="322.30" width="10.6" height="1" fill="rgba(255,255,255,0.35)"/><rect x="1229.70" y="317.86" width="10.6" height="1" fill="rgba(255,255,255,0.35)"/><rect x="1244.54" y="390.12" width="10.6" height="167.58" fill="#6fb19a"/><rect x="1244.54" y="372.51" width="10.6" height="17.61" fill="#6a92be"/><rect x="1244.54" y="367.90" width="10.6" height="4.61" fill="#c86682"/><rect x="1244.54" y="356.54" width="10.6" height="11.36" fill="#8b72b4"/><rect x="1244.54" y="352.26" width="10.6" height="4.28" fill="#c28fad"/><rect x="1244.54" y="348.64" width="10.6" height="3.62" fill="#d3c066"/><rect x="1244.54" y="390.12" width="10.6" height="1" fill="rgba(255,255,255,0.35)"/><rect x="1244.54" y="372.51" width="10.6" height="1" fill="rgba(255,255,255,0.35)"/><rect x="1244.54" y="367.90" width="10.6" height="1" fill="rgba(255,255,255,0.35)"/><rect x="1244.54" y="356.54" width="10.6" height="1" fill="rgba(255,255,255,0.35)"/><rect x="1244.54" y="352.26" width="10.6" height="1" fill="rgba(255,255,255,0.35)"/><rect x="1259.39" y="374.98" width="10.6" height="182.72" fill="#6fb19a"/><rect x="1259.39" y="354.90" width="10.6" height="20.08" fill="#6a92be"/><rect x="1259.39" y="347.82" width="10.6" height="7.08" fill="#c86682"/><rect x="1259.39" y="341.56" width="10.6" height="6.26" fill="#c28fad"/><rect x="1259.39" y="337.94" width="10.6" height="3.62" fill="#d3c066"/><rect x="1259.39" y="374.98" width="10.6" height="1" fill="rgba(255,255,255,0.35)"/><rect x="1259.39" y="354.90" width="10.6" height="1" fill="rgba(255,255,255,0.35)"/><rect x="1259.39" y="347.82" width="10.6" height="1" fill="rgba(255,255,255,0.35)"/><rect x="1259.39" y="341.56" width="10.6" height="1" fill="rgba(255,255,255,0.35)"/><rect x="1274.23" y="374.16" width="10.6" height="183.54" fill="#6fb19a"/><rect x="1274.23" y="353.58" width="10.6" height="20.58" fill="#6a92be"/><rect x="1274.23" y="346.67" width="10.6" height="6.91" fill="#c86682"/><rect x="1274.23" y="339.26" width="10.6" height="7.41" fill="#8b72b4"/><rect x="1274.23" y="336.79" width="10.6" height="2.47" fill="#c28fad"/><rect x="1274.23" y="332.18" width="10.6" height="4.61" fill="#d3c066"/><rect x="1274.23" y="374.16" width="10.6" height="1" fill="rgba(255,255,255,0.35)"/><rect x="1274.23" y="353.58" width="10.6" height="1" fill="rgba(255,255,255,0.35)"/><rect x="1274.23" y="346.67" width="10.6" height="1" fill="rgba(255,255,255,0.35)"/><rect x="1274.23" y="339.26" width="10.6" height="1" fill="rgba(255,255,255,0.35)"/><rect x="1274.23" y="336.79" width="10.6" height="1" fill="rgba(255,255,255,0.35)"/><rect x="1289.07" y="365.93" width="10.6" height="191.77" fill="#6fb19a"/><rect x="1289.07" y="352.76" width="10.6" height="13.17" fill="#6a92be"/><rect x="1289.07" y="343.70" width="10.6" height="9.05" fill="#c86682"/><rect x="1289.07" y="336.63" width="10.6" height="7.08" fill="#8b72b4"/><rect x="1289.07" y="330.53" width="10.6" height="6.09" fill="#c28fad"/><rect x="1289.07" y="327.24" width="10.6" height="3.29" fill="#d3c066"/><rect x="1289.07" y="365.93" width="10.6" height="1" fill="rgba(255,255,255,0.35)"/><rect x="1289.07" y="352.76" width="10.6" height="1" fill="rgba(255,255,255,0.35)"/><rect x="1289.07" y="343.70" width="10.6" height="1" fill="rgba(255,255,255,0.35)"/><rect x="1289.07" y="336.63" width="10.6" height="1" fill="rgba(255,255,255,0.35)"/><rect x="1289.07" y="330.53" width="10.6" height="1" fill="rgba(255,255,255,0.35)"/><rect x="1303.91" y="387.82" width="10.6" height="169.88" fill="#6fb19a"/><rect x="1303.91" y="371.69" width="10.6" height="16.13" fill="#6a92be"/><rect x="1303.91" y="365.93" width="10.6" height="5.76" fill="#c86682"/><rect x="1303.91" y="360.66" width="10.6" height="5.27" fill="#c28fad"/><rect x="1303.91" y="356.05" width="10.6" height="4.61" fill="#d3c066"/><rect x="1303.91" y="387.82" width="10.6" height="1" fill="rgba(255,255,255,0.35)"/><rect x="1303.91" y="371.69" width="10.6" height="1" fill="rgba(255,255,255,0.35)"/><rect x="1303.91" y="365.93" width="10.6" height="1" fill="rgba(255,255,255,0.35)"/><rect x="1303.91" y="360.66" width="10.6" height="1" fill="rgba(255,255,255,0.35)"/><rect x="1318.75" y="400.82" width="10.6" height="156.88" fill="#6fb19a"/><rect x="1318.75" y="382.72" width="10.6" height="18.11" fill="#6a92be"/><rect x="1318.75" y="371.19" width="10.6" height="11.52" fill="#c86682"/><rect x="1318.75" y="367.08" width="10.6" height="4.12" fill="#c28fad"/><rect x="1318.75" y="364.28" width="10.6" height="2.80" fill="#d3c066"/><rect x="1318.75" y="400.82" width="10.6" height="1" fill="rgba(255,255,255,0.35)"/><rect x="1318.75" y="382.72" width="10.6" height="1" fill="rgba(255,255,255,0.35)"/><rect x="1318.75" y="371.19" width="10.6" height="1" fill="rgba(255,255,255,0.35)"/><rect x="1318.75" y="367.08" width="10.6" height="1" fill="rgba(255,255,255,0.35)"/><rect x="1333.60" y="368.07" width="10.6" height="189.63" fill="#6fb19a"/><rect x="1333.60" y="352.26" width="10.6" height="15.80" fill="#6a92be"/><rect x="1333.60" y="344.20" width="10.6" height="8.07" fill="#c86682"/><rect x="1333.60" y="339.26" width="10.6" height="4.94" fill="#c28fad"/><rect x="1333.60" y="334.16" width="10.6" height="5.10" fill="#d3c066"/><rect x="1333.60" y="368.07" width="10.6" height="1" fill="rgba(255,255,255,0.35)"/><rect x="1333.60" y="352.26" width="10.6" height="1" fill="rgba(255,255,255,0.35)"/><rect x="1333.60" y="344.20" width="10.6" height="1" fill="rgba(255,255,255,0.35)"/><rect x="1333.60" y="339.26" width="10.6" height="1" fill="rgba(255,255,255,0.35)"/><rect x="1348.44" y="374.16" width="10.6" height="183.54" fill="#6fb19a"/><rect x="1348.44" y="355.72" width="10.6" height="18.44" fill="#6a92be"/><rect x="1348.44" y="348.64" width="10.6" height="7.08" fill="#c86682"/><rect x="1348.44" y="343.70" width="10.6" height="4.94" fill="#c28fad"/><rect x="1348.44" y="341.23" width="10.6" height="2.47" fill="#d3c066"/><rect x="1348.44" y="374.16" width="10.6" height="1" fill="rgba(255,255,255,0.35)"/><rect x="1348.44" y="355.72" width="10.6" height="1" fill="rgba(255,255,255,0.35)"/><rect x="1348.44" y="348.64" width="10.6" height="1" fill="rgba(255,255,255,0.35)"/><rect x="1348.44" y="343.70" width="10.6" height="1" fill="rgba(255,255,255,0.35)"/><rect x="1363.28" y="379.92" width="10.6" height="177.78" fill="#6fb19a"/><rect x="1363.28" y="362.96" width="10.6" height="16.95" fill="#6a92be"/><rect x="1363.28" y="340.41" width="10.6" height="22.55" fill="#c86682"/><rect x="1363.28" y="336.63" width="10.6" height="3.79" fill="#8b72b4"/><rect x="1363.28" y="330.86" width="10.6" height="5.76" fill="#c28fad"/><rect x="1363.28" y="322.63" width="10.6" height="8.23" fill="#d3c066"/><rect x="1363.28" y="379.92" width="10.6" height="1" fill="rgba(255,255,255,0.35)"/><rect x="1363.28" y="362.96" width="10.6" height="1" fill="rgba(255,255,255,0.35)"/><rect x="1363.28" y="340.41" width="10.6" height="1" fill="rgba(255,255,255,0.35)"/><rect x="1363.28" y="336.63" width="10.6" height="1" fill="rgba(255,255,255,0.35)"/><rect x="1363.28" y="330.86" width="10.6" height="1" fill="rgba(255,255,255,0.35)"/><rect x="1378.12" y="402.14" width="10.6" height="155.56" fill="#6fb19a"/><rect x="1378.12" y="386.50" width="10.6" height="15.64" fill="#6a92be"/><rect x="1378.12" y="376.30" width="10.6" height="10.21" fill="#c86682"/><rect x="1378.12" y="368.40" width="10.6" height="7.90" fill="#8b72b4"/><rect x="1378.12" y="364.28" width="10.6" height="4.12" fill="#c28fad"/><rect x="1378.12" y="360.99" width="10.6" height="3.29" fill="#d3c066"/><rect x="1378.12" y="402.14" width="10.6" height="1" fill="rgba(255,255,255,0.35)"/><rect x="1378.12" y="386.50" width="10.6" height="1" fill="rgba(255,255,255,0.35)"/><rect x="1378.12" y="376.30" width="10.6" height="1" fill="rgba(255,255,255,0.35)"/><rect x="1378.12" y="368.40" width="10.6" height="1" fill="rgba(255,255,255,0.35)"/><rect x="1378.12" y="364.28" width="10.6" height="1" fill="rgba(255,255,255,0.35)"/><rect x="1392.96" y="404.12" width="10.6" height="153.58" fill="#6fb19a"/><rect x="1392.96" y="386.50" width="10.6" height="17.61" fill="#6a92be"/><rect x="1392.96" y="378.77" width="10.6" height="7.74" fill="#c86682"/><rect x="1392.96" y="373.00" width="10.6" height="5.76" fill="#c28fad"/><rect x="1392.96" y="369.55" width="10.6" height="3.46" fill="#d3c066"/><rect x="1392.96" y="404.12" width="10.6" height="1" fill="rgba(255,255,255,0.35)"/><rect x="1392.96" y="386.50" width="10.6" height="1" fill="rgba(255,255,255,0.35)"/><rect x="1392.96" y="378.77" width="10.6" height="1" fill="rgba(255,255,255,0.35)"/><rect x="1392.96" y="373.00" width="10.6" height="1" fill="rgba(255,255,255,0.35)"/><rect x="1407.81" y="343.37" width="10.6" height="214.33" fill="#6fb19a"/><rect x="1407.81" y="324.77" width="10.6" height="18.60" fill="#6a92be"/><rect x="1407.81" y="315.23" width="10.6" height="9.55" fill="#c86682"/><rect x="1407.81" y="307.82" width="10.6" height="7.41" fill="#8b72b4"/><rect x="1407.81" y="303.87" width="10.6" height="3.95" fill="#c28fad"/><rect x="1407.81" y="301.73" width="10.6" height="2.14" fill="#d3c066"/><rect x="1407.81" y="343.37" width="10.6" height="1" fill="rgba(255,255,255,0.35)"/><rect x="1407.81" y="324.77" width="10.6" height="1" fill="rgba(255,255,255,0.35)"/><rect x="1407.81" y="315.23" width="10.6" height="1" fill="rgba(255,255,255,0.35)"/><rect x="1407.81" y="307.82" width="10.6" height="1" fill="rgba(255,255,255,0.35)"/><rect x="1407.81" y="303.87" width="10.6" height="1" fill="rgba(255,255,255,0.35)"/><rect x="1422.65" y="388.15" width="10.6" height="169.55" fill="#6fb19a"/><rect x="1422.65" y="373.66" width="10.6" height="14.49" fill="#6a92be"/><rect x="1422.65" y="368.72" width="10.6" height="4.94" fill="#c86682"/><rect x="1422.65" y="366.75" width="10.6" height="1.98" fill="#c28fad"/><rect x="1422.65" y="363.79" width="10.6" height="2.96" fill="#d3c066"/><rect x="1422.65" y="388.15" width="10.6" height="1" fill="rgba(255,255,255,0.35)"/><rect x="1422.65" y="373.66" width="10.6" height="1" fill="rgba(255,255,255,0.35)"/><rect x="1422.65" y="368.72" width="10.6" height="1" fill="rgba(255,255,255,0.35)"/><rect x="1422.65" y="366.75" width="10.6" height="1" fill="rgba(255,255,255,0.35)"/><rect x="1437.49" y="362.14" width="10.6" height="195.56" fill="#6fb19a"/><rect x="1437.49" y="342.06" width="10.6" height="20.08" fill="#6a92be"/><rect x="1437.49" y="336.79" width="10.6" height="5.27" fill="#c86682"/><rect x="1437.49" y="331.69" width="10.6" height="5.10" fill="#c28fad"/><rect x="1437.49" y="327.57" width="10.6" height="4.12" fill="#d3c066"/><rect x="1437.49" y="362.14" width="10.6" height="1" fill="rgba(255,255,255,0.35)"/><rect x="1437.49" y="342.06" width="10.6" height="1" fill="rgba(255,255,255,0.35)"/><rect x="1437.49" y="336.79" width="10.6" height="1" fill="rgba(255,255,255,0.35)"/><rect x="1437.49" y="331.69" width="10.6" height="1" fill="rgba(255,255,255,0.35)"/><rect x="1452.33" y="400.82" width="10.6" height="156.88" fill="#6fb19a"/><rect x="1452.33" y="383.54" width="10.6" height="17.28" fill="#6a92be"/><rect x="1452.33" y="374.65" width="10.6" height="8.89" fill="#c86682"/><rect x="1452.33" y="370.04" width="10.6" height="4.61" fill="#c28fad"/><rect x="1452.33" y="367.08" width="10.6" height="2.96" fill="#d3c066"/><rect x="1452.33" y="400.82" width="10.6" height="1" fill="rgba(255,255,255,0.35)"/><rect x="1452.33" y="383.54" width="10.6" height="1" fill="rgba(255,255,255,0.35)"/><rect x="1452.33" y="374.65" width="10.6" height="1" fill="rgba(255,255,255,0.35)"/><rect x="1452.33" y="370.04" width="10.6" height="1" fill="rgba(255,255,255,0.35)"/><rect x="1467.17" y="390.62" width="10.6" height="167.08" fill="#6fb19a"/><rect x="1467.17" y="374.98" width="10.6" height="15.64" fill="#6a92be"/><rect x="1467.17" y="368.72" width="10.6" height="6.26" fill="#c86682"/><rect x="1467.17" y="362.96" width="10.6" height="5.76" fill="#c28fad"/><rect x="1467.17" y="358.02" width="10.6" height="4.94" fill="#d3c066"/><rect x="1467.17" y="390.62" width="10.6" height="1" fill="rgba(255,255,255,0.35)"/><rect x="1467.17" y="374.98" width="10.6" height="1" fill="rgba(255,255,255,0.35)"/><rect x="1467.17" y="368.72" width="10.6" height="1" fill="rgba(255,255,255,0.35)"/><rect x="1467.17" y="362.96" width="10.6" height="1" fill="rgba(255,255,255,0.35)"/><rect x="1482.02" y="359.34" width="10.6" height="198.36" fill="#6fb19a"/><rect x="1482.02" y="337.94" width="10.6" height="21.40" fill="#6a92be"/><rect x="1482.02" y="332.67" width="10.6" height="5.27" fill="#c86682"/><rect x="1482.02" y="329.71" width="10.6" height="2.96" fill="#c28fad"/><rect x="1482.02" y="325.27" width="10.6" height="4.44" fill="#d3c066"/><rect x="1482.02" y="359.34" width="10.6" height="1" fill="rgba(255,255,255,0.35)"/><rect x="1482.02" y="337.94" width="10.6" height="1" fill="rgba(255,255,255,0.35)"/><rect x="1482.02" y="332.67" width="10.6" height="1" fill="rgba(255,255,255,0.35)"/><rect x="1482.02" y="329.71" width="10.6" height="1" fill="rgba(255,255,255,0.35)"/><rect x="1496.86" y="370.04" width="10.6" height="187.66" fill="#6fb19a"/><rect x="1496.86" y="351.93" width="10.6" height="18.11" fill="#6a92be"/><rect x="1496.86" y="340.74" width="10.6" height="11.19" fill="#c86682"/><rect x="1496.86" y="336.63" width="10.6" height="4.12" fill="#8b72b4"/><rect x="1496.86" y="330.53" width="10.6" height="6.09" fill="#c28fad"/><rect x="1496.86" y="326.09" width="10.6" height="4.44" fill="#d3c066"/><rect x="1496.86" y="370.04" width="10.6" height="1" fill="rgba(255,255,255,0.35)"/><rect x="1496.86" y="351.93" width="10.6" height="1" fill="rgba(255,255,255,0.35)"/><rect x="1496.86" y="340.74" width="10.6" height="1" fill="rgba(255,255,255,0.35)"/><rect x="1496.86" y="336.63" width="10.6" height="1" fill="rgba(255,255,255,0.35)"/><rect x="1496.86" y="330.53" width="10.6" height="1" fill="rgba(255,255,255,0.35)"/><rect x="1511.70" y="349.47" width="10.6" height="208.23" fill="#6fb19a"/><rect x="1511.70" y="332.67" width="10.6" height="16.79" fill="#6a92be"/><rect x="1511.70" y="323.46" width="10.6" height="9.22" fill="#c86682"/><rect x="1511.70" y="314.07" width="10.6" height="9.38" fill="#8b72b4"/><rect x="1511.70" y="308.64" width="10.6" height="5.43" fill="#c28fad"/><rect x="1511.70" y="301.23" width="10.6" height="7.41" fill="#d3c066"/><rect x="1511.70" y="349.47" width="10.6" height="1" fill="rgba(255,255,255,0.35)"/><rect x="1511.70" y="332.67" width="10.6" height="1" fill="rgba(255,255,255,0.35)"/><rect x="1511.70" y="323.46" width="10.6" height="1" fill="rgba(255,255,255,0.35)"/><rect x="1511.70" y="314.07" width="10.6" height="1" fill="rgba(255,255,255,0.35)"/><rect x="1511.70" y="308.64" width="10.6" height="1" fill="rgba(255,255,255,0.35)"/><rect x="1526.54" y="379.92" width="10.6" height="177.78" fill="#6fb19a"/><rect x="1526.54" y="358.52" width="10.6" height="21.40" fill="#6a92be"/><rect x="1526.54" y="339.59" width="10.6" height="18.93" fill="#c86682"/><rect x="1526.54" y="333.50" width="10.6" height="6.09" fill="#c28fad"/><rect x="1526.54" y="323.95" width="10.6" height="9.55" fill="#d3c066"/><rect x="1526.54" y="379.92" width="10.6" height="1" fill="rgba(255,255,255,0.35)"/><rect x="1526.54" y="358.52" width="10.6" height="1" fill="rgba(255,255,255,0.35)"/><rect x="1526.54" y="339.59" width="10.6" height="1" fill="rgba(255,255,255,0.35)"/><rect x="1526.54" y="333.50" width="10.6" height="1" fill="rgba(255,255,255,0.35)"/><rect x="1541.38" y="369.22" width="10.6" height="188.48" fill="#6fb19a"/><rect x="1541.38" y="350.29" width="10.6" height="18.93" fill="#6a92be"/><rect x="1541.38" y="333.83" width="10.6" height="16.46" fill="#c86682"/><rect x="1541.38" y="328.89" width="10.6" height="4.94" fill="#c28fad"/><rect x="1541.38" y="320.66" width="10.6" height="8.23" fill="#d3c066"/><rect x="1541.38" y="369.22" width="10.6" height="1" fill="rgba(255,255,255,0.35)"/><rect x="1541.38" y="350.29" width="10.6" height="1" fill="rgba(255,255,255,0.35)"/><rect x="1541.38" y="333.83" width="10.6" height="1" fill="rgba(255,255,255,0.35)"/><rect x="1541.38" y="328.89" width="10.6" height="1" fill="rgba(255,255,255,0.35)"/><rect x="1556.23" y="362.96" width="10.6" height="194.74" fill="#6fb19a"/><rect x="1556.23" y="346.17" width="10.6" height="16.79" fill="#6a92be"/><rect x="1556.23" y="339.09" width="10.6" height="7.08" fill="#c86682"/><rect x="1556.23" y="335.47" width="10.6" height="3.62" fill="#c28fad"/><rect x="1556.23" y="332.51" width="10.6" height="2.96" fill="#d3c066"/><rect x="1556.23" y="362.96" width="10.6" height="1" fill="rgba(255,255,255,0.35)"/><rect x="1556.23" y="346.17" width="10.6" height="1" fill="rgba(255,255,255,0.35)"/><rect x="1556.23" y="339.09" width="10.6" height="1" fill="rgba(255,255,255,0.35)"/><rect x="1556.23" y="335.47" width="10.6" height="1" fill="rgba(255,255,255,0.35)"/><rect x="1571.07" y="376.30" width="10.6" height="181.40" fill="#6fb19a"/><rect x="1571.07" y="357.70" width="10.6" height="18.60" fill="#6a92be"/><rect x="1571.07" y="352.43" width="10.6" height="5.27" fill="#c86682"/><rect x="1571.07" y="347.49" width="10.6" height="4.94" fill="#c28fad"/><rect x="1571.07" y="342.06" width="10.6" height="5.43" fill="#d3c066"/><rect x="1571.07" y="376.30" width="10.6" height="1" fill="rgba(255,255,255,0.35)"/><rect x="1571.07" y="357.70" width="10.6" height="1" fill="rgba(255,255,255,0.35)"/><rect x="1571.07" y="352.43" width="10.6" height="1" fill="rgba(255,255,255,0.35)"/><rect x="1571.07" y="347.49" width="10.6" height="1" fill="rgba(255,255,255,0.35)"/><rect x="1585.91" y="380.74" width="10.6" height="176.96" fill="#6fb19a"/><rect x="1585.91" y="367.24" width="10.6" height="13.50" fill="#6a92be"/><rect x="1585.91" y="352.76" width="10.6" height="14.49" fill="#c86682"/><rect x="1585.91" y="345.84" width="10.6" height="6.91" fill="#8b72b4"/><rect x="1585.91" y="339.59" width="10.6" height="6.26" fill="#c28fad"/><rect x="1585.91" y="332.18" width="10.6" height="7.41" fill="#d3c066"/><rect x="1585.91" y="380.74" width="10.6" height="1" fill="rgba(255,255,255,0.35)"/><rect x="1585.91" y="367.24" width="10.6" height="1" fill="rgba(255,255,255,0.35)"/><rect x="1585.91" y="352.76" width="10.6" height="1" fill="rgba(255,255,255,0.35)"/><rect x="1585.91" y="345.84" width="10.6" height="1" fill="rgba(255,255,255,0.35)"/><rect x="1585.91" y="339.59" width="10.6" height="1" fill="rgba(255,255,255,0.35)"/><rect x="1600.75" y="351.93" width="10.6" height="205.77" fill="#6fb19a"/><rect x="1600.75" y="339.09" width="10.6" height="12.84" fill="#6a92be"/><rect x="1600.75" y="327.24" width="10.6" height="11.85" fill="#c86682"/><rect x="1600.75" y="319.34" width="10.6" height="7.90" fill="#8b72b4"/><rect x="1600.75" y="311.93" width="10.6" height="7.41" fill="#c28fad"/><rect x="1600.75" y="305.51" width="10.6" height="6.42" fill="#d3c066"/><rect x="1600.75" y="351.93" width="10.6" height="1" fill="rgba(255,255,255,0.35)"/><rect x="1600.75" y="339.09" width="10.6" height="1" fill="rgba(255,255,255,0.35)"/><rect x="1600.75" y="327.24" width="10.6" height="1" fill="rgba(255,255,255,0.35)"/><rect x="1600.75" y="319.34" width="10.6" height="1" fill="rgba(255,255,255,0.35)"/><rect x="1600.75" y="311.93" width="10.6" height="1" fill="rgba(255,255,255,0.35)"/><rect x="1615.59" y="369.55" width="10.6" height="188.15" fill="#6fb19a"/><rect x="1615.59" y="356.54" width="10.6" height="13.00" fill="#6a92be"/><rect x="1615.59" y="347.00" width="10.6" height="9.55" fill="#c86682"/><rect x="1615.59" y="343.37" width="10.6" height="3.62" fill="#8b72b4"/><rect x="1615.59" y="339.09" width="10.6" height="4.28" fill="#c28fad"/><rect x="1615.59" y="332.18" width="10.6" height="6.91" fill="#d3c066"/><rect x="1615.59" y="369.55" width="10.6" height="1" fill="rgba(255,255,255,0.35)"/><rect x="1615.59" y="356.54" width="10.6" height="1" fill="rgba(255,255,255,0.35)"/><rect x="1615.59" y="347.00" width="10.6" height="1" fill="rgba(255,255,255,0.35)"/><rect x="1615.59" y="343.37" width="10.6" height="1" fill="rgba(255,255,255,0.35)"/><rect x="1615.59" y="339.09" width="10.6" height="1" fill="rgba(255,255,255,0.35)"/><rect x="1630.44" y="394.73" width="10.6" height="162.97" fill="#6fb19a"/><rect x="1630.44" y="383.54" width="10.6" height="11.19" fill="#6a92be"/><rect x="1630.44" y="378.27" width="10.6" height="5.27" fill="#c86682"/><rect x="1630.44" y="374.16" width="10.6" height="4.12" fill="#8b72b4"/><rect x="1630.44" y="370.37" width="10.6" height="3.79" fill="#c28fad"/><rect x="1630.44" y="366.26" width="10.6" height="4.12" fill="#d3c066"/><rect x="1630.44" y="394.73" width="10.6" height="1" fill="rgba(255,255,255,0.35)"/><rect x="1630.44" y="383.54" width="10.6" height="1" fill="rgba(255,255,255,0.35)"/><rect x="1630.44" y="378.27" width="10.6" height="1" fill="rgba(255,255,255,0.35)"/><rect x="1630.44" y="374.16" width="10.6" height="1" fill="rgba(255,255,255,0.35)"/><rect x="1630.44" y="370.37" width="10.6" height="1" fill="rgba(255,255,255,0.35)"/><rect x="1645.28" y="391.44" width="10.6" height="166.26" fill="#6fb19a"/><rect x="1645.28" y="380.41" width="10.6" height="11.03" fill="#6a92be"/><rect x="1645.28" y="373.66" width="10.6" height="6.75" fill="#c86682"/><rect x="1645.28" y="366.75" width="10.6" height="6.91" fill="#8b72b4"/><rect x="1645.28" y="362.63" width="10.6" height="4.12" fill="#c28fad"/><rect x="1645.28" y="360.66" width="10.6" height="1.98" fill="#d3c066"/><rect x="1645.28" y="391.44" width="10.6" height="1" fill="rgba(255,255,255,0.35)"/><rect x="1645.28" y="380.41" width="10.6" height="1" fill="rgba(255,255,255,0.35)"/><rect x="1645.28" y="373.66" width="10.6" height="1" fill="rgba(255,255,255,0.35)"/><rect x="1645.28" y="366.75" width="10.6" height="1" fill="rgba(255,255,255,0.35)"/><rect x="1645.28" y="362.63" width="10.6" height="1" fill="rgba(255,255,255,0.35)"/><rect x="1660.12" y="395.23" width="10.6" height="162.47" fill="#6fb19a"/><rect x="1660.12" y="384.53" width="10.6" height="10.70" fill="#6a92be"/><rect x="1660.12" y="376.63" width="10.6" height="7.90" fill="#c86682"/><rect x="1660.12" y="369.71" width="10.6" height="6.91" fill="#8b72b4"/><rect x="1660.12" y="363.95" width="10.6" height="5.76" fill="#c28fad"/><rect x="1660.12" y="358.85" width="10.6" height="5.10" fill="#d3c066"/><rect x="1660.12" y="395.23" width="10.6" height="1" fill="rgba(255,255,255,0.35)"/><rect x="1660.12" y="384.53" width="10.6" height="1" fill="rgba(255,255,255,0.35)"/><rect x="1660.12" y="376.63" width="10.6" height="1" fill="rgba(255,255,255,0.35)"/><rect x="1660.12" y="369.71" width="10.6" height="1" fill="rgba(255,255,255,0.35)"/><rect x="1660.12" y="363.95" width="10.6" height="1" fill="rgba(255,255,255,0.35)"/><rect x="1674.96" y="390.62" width="10.6" height="167.08" fill="#6fb19a"/><rect x="1674.96" y="380.41" width="10.6" height="10.21" fill="#6a92be"/><rect x="1674.96" y="361.81" width="10.6" height="18.60" fill="#c86682"/><rect x="1674.96" y="357.70" width="10.6" height="4.12" fill="#c28fad"/><rect x="1674.96" y="351.93" width="10.6" height="5.76" fill="#d3c066"/><rect x="1674.96" y="390.62" width="10.6" height="1" fill="rgba(255,255,255,0.35)"/><rect x="1674.96" y="380.41" width="10.6" height="1" fill="rgba(255,255,255,0.35)"/><rect x="1674.96" y="361.81" width="10.6" height="1" fill="rgba(255,255,255,0.35)"/><rect x="1674.96" y="357.70" width="10.6" height="1" fill="rgba(255,255,255,0.35)"/><rect x="1689.80" y="369.71" width="10.6" height="187.99" fill="#6fb19a"/><rect x="1689.80" y="351.93" width="10.6" height="17.78" fill="#6a92be"/><rect x="1689.80" y="345.02" width="10.6" height="6.91" fill="#c86682"/><rect x="1689.80" y="337.94" width="10.6" height="7.08" fill="#8b72b4"/><rect x="1689.80" y="332.51" width="10.6" height="5.43" fill="#c28fad"/><rect x="1689.80" y="327.74" width="10.6" height="4.77" fill="#d3c066"/><rect x="1689.80" y="369.71" width="10.6" height="1" fill="rgba(255,255,255,0.35)"/><rect x="1689.80" y="351.93" width="10.6" height="1" fill="rgba(255,255,255,0.35)"/><rect x="1689.80" y="345.02" width="10.6" height="1" fill="rgba(255,255,255,0.35)"/><rect x="1689.80" y="337.94" width="10.6" height="1" fill="rgba(255,255,255,0.35)"/><rect x="1689.80" y="332.51" width="10.6" height="1" fill="rgba(255,255,255,0.35)"/><rect x="1704.65" y="372.51" width="10.6" height="185.19" fill="#6fb19a"/><rect x="1704.65" y="353.91" width="10.6" height="18.60" fill="#6a92be"/><rect x="1704.65" y="340.74" width="10.6" height="13.17" fill="#c86682"/><rect x="1704.65" y="328.89" width="10.6" height="11.85" fill="#8b72b4"/><rect x="1704.65" y="324.77" width="10.6" height="4.12" fill="#c28fad"/><rect x="1704.65" y="317.70" width="10.6" height="7.08" fill="#d3c066"/><rect x="1704.65" y="372.51" width="10.6" height="1" fill="rgba(255,255,255,0.35)"/><rect x="1704.65" y="353.91" width="10.6" height="1" fill="rgba(255,255,255,0.35)"/><rect x="1704.65" y="340.74" width="10.6" height="1" fill="rgba(255,255,255,0.35)"/><rect x="1704.65" y="328.89" width="10.6" height="1" fill="rgba(255,255,255,0.35)"/><rect x="1704.65" y="324.77" width="10.6" height="1" fill="rgba(255,255,255,0.35)"/><rect x="1719.49" y="415.80" width="10.6" height="141.90" fill="#6fb19a"/><rect x="1719.49" y="400.00" width="10.6" height="15.80" fill="#6a92be"/><rect x="1719.49" y="370.86" width="10.6" height="29.14" fill="#c86682"/><rect x="1719.49" y="363.79" width="10.6" height="7.08" fill="#c28fad"/><rect x="1719.49" y="352.76" width="10.6" height="11.03" fill="#d3c066"/><rect x="1719.49" y="415.80" width="10.6" height="1" fill="rgba(255,255,255,0.35)"/><rect x="1719.49" y="400.00" width="10.6" height="1" fill="rgba(255,255,255,0.35)"/><rect x="1719.49" y="370.86" width="10.6" height="1" fill="rgba(255,255,255,0.35)"/><rect x="1719.49" y="363.79" width="10.6" height="1" fill="rgba(255,255,255,0.35)"/><rect x="1734.33" y="386.17" width="10.6" height="171.53" fill="#6fb19a"/><rect x="1734.33" y="365.93" width="10.6" height="20.25" fill="#6a92be"/><rect x="1734.33" y="354.73" width="10.6" height="11.19" fill="#c86682"/><rect x="1734.33" y="350.62" width="10.6" height="4.12" fill="#8b72b4"/><rect x="1734.33" y="345.84" width="10.6" height="4.77" fill="#c28fad"/><rect x="1734.33" y="339.59" width="10.6" height="6.26" fill="#d3c066"/><rect x="1734.33" y="386.17" width="10.6" height="1" fill="rgba(255,255,255,0.35)"/><rect x="1734.33" y="365.93" width="10.6" height="1" fill="rgba(255,255,255,0.35)"/><rect x="1734.33" y="354.73" width="10.6" height="1" fill="rgba(255,255,255,0.35)"/><rect x="1734.33" y="350.62" width="10.6" height="1" fill="rgba(255,255,255,0.35)"/><rect x="1734.33" y="345.84" width="10.6" height="1" fill="rgba(255,255,255,0.35)"/><rect x="1749.17" y="347.00" width="10.6" height="210.70" fill="#6fb19a"/><rect x="1749.17" y="328.40" width="10.6" height="18.60" fill="#6a92be"/><rect x="1749.17" y="317.37" width="10.6" height="11.03" fill="#c86682"/><rect x="1749.17" y="299.75" width="10.6" height="17.61" fill="#8b72b4"/><rect x="1749.17" y="293.99" width="10.6" height="5.76" fill="#c28fad"/><rect x="1749.17" y="288.89" width="10.6" height="5.10" fill="#d3c066"/><rect x="1749.17" y="347.00" width="10.6" height="1" fill="rgba(255,255,255,0.35)"/><rect x="1749.17" y="328.40" width="10.6" height="1" fill="rgba(255,255,255,0.35)"/><rect x="1749.17" y="317.37" width="10.6" height="1" fill="rgba(255,255,255,0.35)"/><rect x="1749.17" y="299.75" width="10.6" height="1" fill="rgba(255,255,255,0.35)"/><rect x="1749.17" y="293.99" width="10.6" height="1" fill="rgba(255,255,255,0.35)"/><rect x="1764.01" y="365.60" width="10.6" height="192.10" fill="#6fb19a"/><rect x="1764.01" y="344.53" width="10.6" height="21.07" fill="#6a92be"/><rect x="1764.01" y="338.77" width="10.6" height="5.76" fill="#c86682"/><rect x="1764.01" y="334.32" width="10.6" height="4.44" fill="#c28fad"/><rect x="1764.01" y="332.18" width="10.6" height="2.14" fill="#d3c066"/><rect x="1764.01" y="365.60" width="10.6" height="1" fill="rgba(255,255,255,0.35)"/><rect x="1764.01" y="344.53" width="10.6" height="1" fill="rgba(255,255,255,0.35)"/><rect x="1764.01" y="338.77" width="10.6" height="1" fill="rgba(255,255,255,0.35)"/><rect x="1764.01" y="334.32" width="10.6" height="1" fill="rgba(255,255,255,0.35)"/><rect x="1778.86" y="365.93" width="10.6" height="191.77" fill="#6fb19a"/><rect x="1778.86" y="347.33" width="10.6" height="18.60" fill="#6a92be"/><rect x="1778.86" y="345.35" width="10.6" height="1.98" fill="#c86682"/><rect x="1778.86" y="340.91" width="10.6" height="4.44" fill="#8b72b4"/><rect x="1778.86" y="338.44" width="10.6" height="2.47" fill="#c28fad"/><rect x="1778.86" y="334.98" width="10.6" height="3.46" fill="#d3c066"/><rect x="1778.86" y="365.93" width="10.6" height="1" fill="rgba(255,255,255,0.35)"/><rect x="1778.86" y="347.33" width="10.6" height="1" fill="rgba(255,255,255,0.35)"/><rect x="1778.86" y="345.35" width="10.6" height="1" fill="rgba(255,255,255,0.35)"/><rect x="1778.86" y="340.91" width="10.6" height="1" fill="rgba(255,255,255,0.35)"/><rect x="1778.86" y="338.44" width="10.6" height="1" fill="rgba(255,255,255,0.35)"/><rect x="1793.70" y="373.00" width="10.6" height="184.70" fill="#6fb19a"/><rect x="1793.70" y="352.76" width="10.6" height="20.25" fill="#6a92be"/><rect x="1793.70" y="348.97" width="10.6" height="3.79" fill="#c86682"/><rect x="1793.70" y="340.74" width="10.6" height="8.23" fill="#8b72b4"/><rect x="1793.70" y="335.97" width="10.6" height="4.77" fill="#c28fad"/><rect x="1793.70" y="332.67" width="10.6" height="3.29" fill="#d3c066"/><rect x="1793.70" y="373.00" width="10.6" height="1" fill="rgba(255,255,255,0.35)"/><rect x="1793.70" y="352.76" width="10.6" height="1" fill="rgba(255,255,255,0.35)"/><rect x="1793.70" y="348.97" width="10.6" height="1" fill="rgba(255,255,255,0.35)"/><rect x="1793.70" y="340.74" width="10.6" height="1" fill="rgba(255,255,255,0.35)"/><rect x="1793.70" y="335.97" width="10.6" height="1" fill="rgba(255,255,255,0.35)"/><rect x="1808.54" y="396.05" width="10.6" height="161.65" fill="#6fb19a"/><rect x="1808.54" y="379.92" width="10.6" height="16.13" fill="#6a92be"/><rect x="1808.54" y="376.95" width="10.6" height="2.96" fill="#c86682"/><rect x="1808.54" y="370.86" width="10.6" height="6.09" fill="#8b72b4"/><rect x="1808.54" y="366.26" width="10.6" height="4.61" fill="#c28fad"/><rect x="1808.54" y="364.61" width="10.6" height="1.65" fill="#d3c066"/><rect x="1808.54" y="396.05" width="10.6" height="1" fill="rgba(255,255,255,0.35)"/><rect x="1808.54" y="379.92" width="10.6" height="1" fill="rgba(255,255,255,0.35)"/><rect x="1808.54" y="376.95" width="10.6" height="1" fill="rgba(255,255,255,0.35)"/><rect x="1808.54" y="370.86" width="10.6" height="1" fill="rgba(255,255,255,0.35)"/><rect x="1808.54" y="366.26" width="10.6" height="1" fill="rgba(255,255,255,0.35)"/><rect x="1823.38" y="360.99" width="10.6" height="196.71" fill="#6fb19a"/><rect x="1823.38" y="342.55" width="10.6" height="18.44" fill="#6a92be"/><rect x="1823.38" y="335.14" width="10.6" height="7.41" fill="#c86682"/><rect x="1823.38" y="331.69" width="10.6" height="3.46" fill="#8b72b4"/><rect x="1823.38" y="328.40" width="10.6" height="3.29" fill="#c28fad"/><rect x="1823.38" y="323.95" width="10.6" height="4.44" fill="#d3c066"/><rect x="1823.38" y="360.99" width="10.6" height="1" fill="rgba(255,255,255,0.35)"/><rect x="1823.38" y="342.55" width="10.6" height="1" fill="rgba(255,255,255,0.35)"/><rect x="1823.38" y="335.14" width="10.6" height="1" fill="rgba(255,255,255,0.35)"/><rect x="1823.38" y="331.69" width="10.6" height="1" fill="rgba(255,255,255,0.35)"/><rect x="1823.38" y="328.40" width="10.6" height="1" fill="rgba(255,255,255,0.35)"/><rect x="1838.22" y="378.60" width="10.6" height="179.10" fill="#6fb19a"/><rect x="1838.22" y="358.02" width="10.6" height="20.58" fill="#6a92be"/><rect x="1838.22" y="353.09" width="10.6" height="4.94" fill="#c86682"/><rect x="1838.22" y="345.84" width="10.6" height="7.24" fill="#8b72b4"/><rect x="1838.22" y="341.73" width="10.6" height="4.12" fill="#c28fad"/><rect x="1838.22" y="336.30" width="10.6" height="5.43" fill="#d3c066"/><rect x="1838.22" y="378.60" width="10.6" height="1" fill="rgba(255,255,255,0.35)"/><rect x="1838.22" y="358.02" width="10.6" height="1" fill="rgba(255,255,255,0.35)"/><rect x="1838.22" y="353.09" width="10.6" height="1" fill="rgba(255,255,255,0.35)"/><rect x="1838.22" y="345.84" width="10.6" height="1" fill="rgba(255,255,255,0.35)"/><rect x="1838.22" y="341.73" width="10.6" height="1" fill="rgba(255,255,255,0.35)"/><rect x="1853.07" y="402.47" width="10.6" height="155.23" fill="#6fb19a"/><rect x="1853.07" y="385.35" width="10.6" height="17.12" fill="#6a92be"/><rect x="1853.07" y="381.89" width="10.6" height="3.46" fill="#c86682"/><rect x="1853.07" y="375.80" width="10.6" height="6.09" fill="#8b72b4"/><rect x="1853.07" y="373.00" width="10.6" height="2.80" fill="#c28fad"/><rect x="1853.07" y="371.19" width="10.6" height="1.81" fill="#d3c066"/><rect x="1853.07" y="402.47" width="10.6" height="1" fill="rgba(255,255,255,0.35)"/><rect x="1853.07" y="385.35" width="10.6" height="1" fill="rgba(255,255,255,0.35)"/><rect x="1853.07" y="381.89" width="10.6" height="1" fill="rgba(255,255,255,0.35)"/><rect x="1853.07" y="375.80" width="10.6" height="1" fill="rgba(255,255,255,0.35)"/><rect x="1853.07" y="373.00" width="10.6" height="1" fill="rgba(255,255,255,0.35)"/><rect x="1867.91" y="375.31" width="10.6" height="182.39" fill="#6fb19a"/><rect x="1867.91" y="359.34" width="10.6" height="15.97" fill="#6a92be"/><rect x="1867.91" y="351.93" width="10.6" height="7.41" fill="#c86682"/><rect x="1867.91" y="344.03" width="10.6" height="7.90" fill="#8b72b4"/><rect x="1867.91" y="339.59" width="10.6" height="4.44" fill="#c28fad"/><rect x="1867.91" y="336.79" width="10.6" height="2.80" fill="#d3c066"/><rect x="1867.91" y="375.31" width="10.6" height="1" fill="rgba(255,255,255,0.35)"/><rect x="1867.91" y="359.34" width="10.6" height="1" fill="rgba(255,255,255,0.35)"/><rect x="1867.91" y="351.93" width="10.6" height="1" fill="rgba(255,255,255,0.35)"/><rect x="1867.91" y="344.03" width="10.6" height="1" fill="rgba(255,255,255,0.35)"/><rect x="1867.91" y="339.59" width="10.6" height="1" fill="rgba(255,255,255,0.35)"/><rect x="1882.75" y="369.22" width="10.6" height="188.48" fill="#6fb19a"/><rect x="1882.75" y="349.14" width="10.6" height="20.08" fill="#6a92be"/><rect x="1882.75" y="333.00" width="10.6" height="16.13" fill="#c86682"/><rect x="1882.75" y="319.51" width="10.6" height="13.50" fill="#8b72b4"/><rect x="1882.75" y="313.58" width="10.6" height="5.93" fill="#c28fad"/><rect x="1882.75" y="305.84" width="10.6" height="7.74" fill="#d3c066"/><rect x="1882.75" y="369.22" width="10.6" height="1" fill="rgba(255,255,255,0.35)"/><rect x="1882.75" y="349.14" width="10.6" height="1" fill="rgba(255,255,255,0.35)"/><rect x="1882.75" y="333.00" width="10.6" height="1" fill="rgba(255,255,255,0.35)"/><rect x="1882.75" y="319.51" width="10.6" height="1" fill="rgba(255,255,255,0.35)"/><rect x="1882.75" y="313.58" width="10.6" height="1" fill="rgba(255,255,255,0.35)"/><rect x="1897.59" y="386.17" width="10.6" height="171.53" fill="#6fb19a"/><rect x="1897.59" y="369.55" width="10.6" height="16.63" fill="#6a92be"/><rect x="1897.59" y="362.63" width="10.6" height="6.91" fill="#c86682"/><rect x="1897.59" y="358.52" width="10.6" height="4.12" fill="#8b72b4"/><rect x="1897.59" y="354.73" width="10.6" height="3.79" fill="#c28fad"/><rect x="1897.59" y="351.11" width="10.6" height="3.62" fill="#d3c066"/><rect x="1897.59" y="386.17" width="10.6" height="1" fill="rgba(255,255,255,0.35)"/><rect x="1897.59" y="369.55" width="10.6" height="1" fill="rgba(255,255,255,0.35)"/><rect x="1897.59" y="362.63" width="10.6" height="1" fill="rgba(255,255,255,0.35)"/><rect x="1897.59" y="358.52" width="10.6" height="1" fill="rgba(255,255,255,0.35)"/><rect x="1897.59" y="354.73" width="10.6" height="1" fill="rgba(255,255,255,0.35)"/><rect x="1912.43" y="376.30" width="10.6" height="181.40" fill="#6fb19a"/><rect x="1912.43" y="360.49" width="10.6" height="15.80" fill="#6a92be"/><rect x="1912.43" y="356.87" width="10.6" height="3.62" fill="#c86682"/><rect x="1912.43" y="353.58" width="10.6" height="3.29" fill="#8b72b4"/><rect x="1912.43" y="350.29" width="10.6" height="3.29" fill="#c28fad"/><rect x="1912.43" y="348.31" width="10.6" height="1.98" fill="#d3c066"/><rect x="1912.43" y="376.30" width="10.6" height="1" fill="rgba(255,255,255,0.35)"/><rect x="1912.43" y="360.49" width="10.6" height="1" fill="rgba(255,255,255,0.35)"/><rect x="1912.43" y="356.87" width="10.6" height="1" fill="rgba(255,255,255,0.35)"/><rect x="1912.43" y="353.58" width="10.6" height="1" fill="rgba(255,255,255,0.35)"/><rect x="1912.43" y="350.29" width="10.6" height="1" fill="rgba(255,255,255,0.35)"/><rect x="1927.28" y="374.49" width="10.6" height="183.21" fill="#6fb19a"/><rect x="1927.28" y="356.38" width="10.6" height="18.11" fill="#6a92be"/><rect x="1927.28" y="342.39" width="10.6" height="13.99" fill="#c86682"/><rect x="1927.28" y="334.65" width="10.6" height="7.74" fill="#8b72b4"/><rect x="1927.28" y="328.56" width="10.6" height="6.09" fill="#c28fad"/><rect x="1927.28" y="324.44" width="10.6" height="4.12" fill="#d3c066"/><rect x="1927.28" y="374.49" width="10.6" height="1" fill="rgba(255,255,255,0.35)"/><rect x="1927.28" y="356.38" width="10.6" height="1" fill="rgba(255,255,255,0.35)"/><rect x="1927.28" y="342.39" width="10.6" height="1" fill="rgba(255,255,255,0.35)"/><rect x="1927.28" y="334.65" width="10.6" height="1" fill="rgba(255,255,255,0.35)"/><rect x="1927.28" y="328.56" width="10.6" height="1" fill="rgba(255,255,255,0.35)"/><rect x="1942.12" y="409.22" width="10.6" height="148.48" fill="#6fb19a"/><rect x="1942.12" y="393.09" width="10.6" height="16.13" fill="#6a92be"/><rect x="1942.12" y="382.39" width="10.6" height="10.70" fill="#c86682"/><rect x="1942.12" y="364.77" width="10.6" height="17.61" fill="#8b72b4"/><rect x="1942.12" y="360.99" width="10.6" height="3.79" fill="#c28fad"/><rect x="1942.12" y="358.19" width="10.6" height="2.80" fill="#d3c066"/><rect x="1942.12" y="409.22" width="10.6" height="1" fill="rgba(255,255,255,0.35)"/><rect x="1942.12" y="393.09" width="10.6" height="1" fill="rgba(255,255,255,0.35)"/><rect x="1942.12" y="382.39" width="10.6" height="1" fill="rgba(255,255,255,0.35)"/><rect x="1942.12" y="364.77" width="10.6" height="1" fill="rgba(255,255,255,0.35)"/><rect x="1942.12" y="360.99" width="10.6" height="1" fill="rgba(255,255,255,0.35)"/><rect x="1956.96" y="333.50" width="10.6" height="224.20" fill="#6fb19a"/><rect x="1956.96" y="315.72" width="10.6" height="17.78" fill="#6a92be"/><rect x="1956.96" y="308.31" width="10.6" height="7.41" fill="#c86682"/><rect x="1956.96" y="295.97" width="10.6" height="12.35" fill="#8b72b4"/><rect x="1956.96" y="289.88" width="10.6" height="6.09" fill="#c28fad"/><rect x="1956.96" y="284.77" width="10.6" height="5.10" fill="#d3c066"/><rect x="1956.96" y="333.50" width="10.6" height="1" fill="rgba(255,255,255,0.35)"/><rect x="1956.96" y="315.72" width="10.6" height="1" fill="rgba(255,255,255,0.35)"/><rect x="1956.96" y="308.31" width="10.6" height="1" fill="rgba(255,255,255,0.35)"/><rect x="1956.96" y="295.97" width="10.6" height="1" fill="rgba(255,255,255,0.35)"/><rect x="1956.96" y="289.88" width="10.6" height="1" fill="rgba(255,255,255,0.35)"/><rect x="1971.80" y="390.12" width="10.6" height="167.58" fill="#6fb19a"/><rect x="1971.80" y="374.16" width="10.6" height="15.97" fill="#6a92be"/><rect x="1971.80" y="365.93" width="10.6" height="8.23" fill="#c86682"/><rect x="1971.80" y="361.48" width="10.6" height="4.44" fill="#c28fad"/><rect x="1971.80" y="358.02" width="10.6" height="3.46" fill="#d3c066"/><rect x="1971.80" y="390.12" width="10.6" height="1" fill="rgba(255,255,255,0.35)"/><rect x="1971.80" y="374.16" width="10.6" height="1" fill="rgba(255,255,255,0.35)"/><rect x="1971.80" y="365.93" width="10.6" height="1" fill="rgba(255,255,255,0.35)"/><rect x="1971.80" y="361.48" width="10.6" height="1" fill="rgba(255,255,255,0.35)"/><rect x="1986.64" y="385.68" width="10.6" height="172.02" fill="#6fb19a"/><rect x="1986.64" y="368.07" width="10.6" height="17.61" fill="#6a92be"/><rect x="1986.64" y="356.05" width="10.6" height="12.02" fill="#c86682"/><rect x="1986.64" y="344.03" width="10.6" height="12.02" fill="#8b72b4"/><rect x="1986.64" y="338.27" width="10.6" height="5.76" fill="#c28fad"/><rect x="1986.64" y="332.51" width="10.6" height="5.76" fill="#d3c066"/><rect x="1986.64" y="385.68" width="10.6" height="1" fill="rgba(255,255,255,0.35)"/><rect x="1986.64" y="368.07" width="10.6" height="1" fill="rgba(255,255,255,0.35)"/><rect x="1986.64" y="356.05" width="10.6" height="1" fill="rgba(255,255,255,0.35)"/><rect x="1986.64" y="344.03" width="10.6" height="1" fill="rgba(255,255,255,0.35)"/><rect x="1986.64" y="338.27" width="10.6" height="1" fill="rgba(255,255,255,0.35)"/><rect x="2001.49" y="366.75" width="10.6" height="190.95" fill="#6fb19a"/><rect x="2001.49" y="345.84" width="10.6" height="20.91" fill="#6a92be"/><rect x="2001.49" y="335.97" width="10.6" height="9.88" fill="#c86682"/><rect x="2001.49" y="330.53" width="10.6" height="5.43" fill="#c28fad"/><rect x="2001.49" y="325.10" width="10.6" height="5.43" fill="#d3c066"/><rect x="2001.49" y="366.75" width="10.6" height="1" fill="rgba(255,255,255,0.35)"/><rect x="2001.49" y="345.84" width="10.6" height="1" fill="rgba(255,255,255,0.35)"/><rect x="2001.49" y="335.97" width="10.6" height="1" fill="rgba(255,255,255,0.35)"/><rect x="2001.49" y="330.53" width="10.6" height="1" fill="rgba(255,255,255,0.35)"/><rect x="2016.33" y="382.39" width="10.6" height="175.31" fill="#6fb19a"/><rect x="2016.33" y="365.93" width="10.6" height="16.46" fill="#6a92be"/><rect x="2016.33" y="359.34" width="10.6" height="6.58" fill="#c86682"/><rect x="2016.33" y="355.72" width="10.6" height="3.62" fill="#8b72b4"/><rect x="2016.33" y="351.44" width="10.6" height="4.28" fill="#c28fad"/><rect x="2016.33" y="344.20" width="10.6" height="7.24" fill="#d3c066"/><rect x="2016.33" y="382.39" width="10.6" height="1" fill="rgba(255,255,255,0.35)"/><rect x="2016.33" y="365.93" width="10.6" height="1" fill="rgba(255,255,255,0.35)"/><rect x="2016.33" y="359.34" width="10.6" height="1" fill="rgba(255,255,255,0.35)"/><rect x="2016.33" y="355.72" width="10.6" height="1" fill="rgba(255,255,255,0.35)"/><rect x="2016.33" y="351.44" width="10.6" height="1" fill="rgba(255,255,255,0.35)"/><rect x="2031.17" y="363.46" width="10.6" height="194.24" fill="#6fb19a"/><rect x="2031.17" y="342.88" width="10.6" height="20.58" fill="#6a92be"/><rect x="2031.17" y="335.14" width="10.6" height="7.74" fill="#c86682"/><rect x="2031.17" y="319.51" width="10.6" height="15.64" fill="#8b72b4"/><rect x="2031.17" y="315.23" width="10.6" height="4.28" fill="#c28fad"/><rect x="2031.17" y="311.93" width="10.6" height="3.29" fill="#d3c066"/><rect x="2031.17" y="363.46" width="10.6" height="1" fill="rgba(255,255,255,0.35)"/><rect x="2031.17" y="342.88" width="10.6" height="1" fill="rgba(255,255,255,0.35)"/><rect x="2031.17" y="335.14" width="10.6" height="1" fill="rgba(255,255,255,0.35)"/><rect x="2031.17" y="319.51" width="10.6" height="1" fill="rgba(255,255,255,0.35)"/><rect x="2031.17" y="315.23" width="10.6" height="1" fill="rgba(255,255,255,0.35)"/><rect x="2046.01" y="385.68" width="10.6" height="172.02" fill="#6fb19a"/><rect x="2046.01" y="368.72" width="10.6" height="16.95" fill="#6a92be"/><rect x="2046.01" y="364.77" width="10.6" height="3.95" fill="#c86682"/><rect x="2046.01" y="360.66" width="10.6" height="4.12" fill="#c28fad"/><rect x="2046.01" y="357.70" width="10.6" height="2.96" fill="#d3c066"/><rect x="2046.01" y="385.68" width="10.6" height="1" fill="rgba(255,255,255,0.35)"/><rect x="2046.01" y="368.72" width="10.6" height="1" fill="rgba(255,255,255,0.35)"/><rect x="2046.01" y="364.77" width="10.6" height="1" fill="rgba(255,255,255,0.35)"/><rect x="2046.01" y="360.66" width="10.6" height="1" fill="rgba(255,255,255,0.35)"/><rect x="2060.85" y="400.49" width="10.6" height="157.21" fill="#6fb19a"/><rect x="2060.85" y="382.72" width="10.6" height="17.78" fill="#6a92be"/><rect x="2060.85" y="369.22" width="10.6" height="13.50" fill="#c86682"/><rect x="2060.85" y="364.28" width="10.6" height="4.94" fill="#8b72b4"/><rect x="2060.85" y="358.85" width="10.6" height="5.43" fill="#c28fad"/><rect x="2060.85" y="351.44" width="10.6" height="7.41" fill="#d3c066"/><rect x="2060.85" y="400.49" width="10.6" height="1" fill="rgba(255,255,255,0.35)"/><rect x="2060.85" y="382.72" width="10.6" height="1" fill="rgba(255,255,255,0.35)"/><rect x="2060.85" y="369.22" width="10.6" height="1" fill="rgba(255,255,255,0.35)"/><rect x="2060.85" y="364.28" width="10.6" height="1" fill="rgba(255,255,255,0.35)"/><rect x="2060.85" y="358.85" width="10.6" height="1" fill="rgba(255,255,255,0.35)"/><rect x="2075.70" y="364.28" width="10.6" height="193.42" fill="#6fb19a"/><rect x="2075.70" y="347.82" width="10.6" height="16.46" fill="#6a92be"/><rect x="2075.70" y="337.61" width="10.6" height="10.21" fill="#c86682"/><rect x="2075.70" y="326.09" width="10.6" height="11.52" fill="#8b72b4"/><rect x="2075.70" y="321.81" width="10.6" height="4.28" fill="#c28fad"/><rect x="2075.70" y="319.01" width="10.6" height="2.80" fill="#d3c066"/><rect x="2075.70" y="364.28" width="10.6" height="1" fill="rgba(255,255,255,0.35)"/><rect x="2075.70" y="347.82" width="10.6" height="1" fill="rgba(255,255,255,0.35)"/><rect x="2075.70" y="337.61" width="10.6" height="1" fill="rgba(255,255,255,0.35)"/><rect x="2075.70" y="326.09" width="10.6" height="1" fill="rgba(255,255,255,0.35)"/><rect x="2075.70" y="321.81" width="10.6" height="1" fill="rgba(255,255,255,0.35)"/><rect x="2090.54" y="340.41" width="10.6" height="217.29" fill="#6fb19a"/><rect x="2090.54" y="322.30" width="10.6" height="18.11" fill="#6a92be"/><rect x="2090.54" y="312.43" width="10.6" height="9.88" fill="#c86682"/><rect x="2090.54" y="307.49" width="10.6" height="4.94" fill="#c28fad"/><rect x="2090.54" y="302.55" width="10.6" height="4.94" fill="#d3c066"/><rect x="2090.54" y="340.41" width="10.6" height="1" fill="rgba(255,255,255,0.35)"/><rect x="2090.54" y="322.30" width="10.6" height="1" fill="rgba(255,255,255,0.35)"/><rect x="2090.54" y="312.43" width="10.6" height="1" fill="rgba(255,255,255,0.35)"/><rect x="2090.54" y="307.49" width="10.6" height="1" fill="rgba(255,255,255,0.35)"/><rect x="2105.38" y="380.41" width="10.6" height="177.29" fill="#6fb19a"/><rect x="2105.38" y="363.13" width="10.6" height="17.28" fill="#6a92be"/><rect x="2105.38" y="352.76" width="10.6" height="10.37" fill="#c86682"/><rect x="2105.38" y="348.64" width="10.6" height="4.12" fill="#8b72b4"/><rect x="2105.38" y="345.84" width="10.6" height="2.80" fill="#c28fad"/><rect x="2105.38" y="339.26" width="10.6" height="6.58" fill="#d3c066"/><rect x="2105.38" y="380.41" width="10.6" height="1" fill="rgba(255,255,255,0.35)"/><rect x="2105.38" y="363.13" width="10.6" height="1" fill="rgba(255,255,255,0.35)"/><rect x="2105.38" y="352.76" width="10.6" height="1" fill="rgba(255,255,255,0.35)"/><rect x="2105.38" y="348.64" width="10.6" height="1" fill="rgba(255,255,255,0.35)"/><rect x="2105.38" y="345.84" width="10.6" height="1" fill="rgba(255,255,255,0.35)"/><rect x="2120.22" y="362.63" width="10.6" height="195.07" fill="#6fb19a"/><rect x="2120.22" y="343.21" width="10.6" height="19.42" fill="#6a92be"/><rect x="2120.22" y="328.40" width="10.6" height="14.81" fill="#c86682"/><rect x="2120.22" y="311.93" width="10.6" height="16.46" fill="#8b72b4"/><rect x="2120.22" y="308.64" width="10.6" height="3.29" fill="#c28fad"/><rect x="2120.22" y="298.44" width="10.6" height="10.21" fill="#d3c066"/><rect x="2120.22" y="362.63" width="10.6" height="1" fill="rgba(255,255,255,0.35)"/><rect x="2120.22" y="343.21" width="10.6" height="1" fill="rgba(255,255,255,0.35)"/><rect x="2120.22" y="328.40" width="10.6" height="1" fill="rgba(255,255,255,0.35)"/><rect x="2120.22" y="311.93" width="10.6" height="1" fill="rgba(255,255,255,0.35)"/><rect x="2120.22" y="308.64" width="10.6" height="1" fill="rgba(255,255,255,0.35)"/><rect x="2135.06" y="361.32" width="10.6" height="196.38" fill="#6fb19a"/><rect x="2135.06" y="346.67" width="10.6" height="14.65" fill="#6a92be"/><rect x="2135.06" y="331.69" width="10.6" height="14.98" fill="#c86682"/><rect x="2135.06" y="315.72" width="10.6" height="15.97" fill="#8b72b4"/><rect x="2135.06" y="310.78" width="10.6" height="4.94" fill="#c28fad"/><rect x="2135.06" y="303.87" width="10.6" height="6.91" fill="#d3c066"/><rect x="2135.06" y="361.32" width="10.6" height="1" fill="rgba(255,255,255,0.35)"/><rect x="2135.06" y="346.67" width="10.6" height="1" fill="rgba(255,255,255,0.35)"/><rect x="2135.06" y="331.69" width="10.6" height="1" fill="rgba(255,255,255,0.35)"/><rect x="2135.06" y="315.72" width="10.6" height="1" fill="rgba(255,255,255,0.35)"/><rect x="2135.06" y="310.78" width="10.6" height="1" fill="rgba(255,255,255,0.35)"/><rect x="2149.91" y="385.19" width="10.6" height="172.51" fill="#6fb19a"/><rect x="2149.91" y="367.24" width="10.6" height="17.94" fill="#6a92be"/><rect x="2149.91" y="346.67" width="10.6" height="20.58" fill="#c86682"/><rect x="2149.91" y="342.39" width="10.6" height="4.28" fill="#c28fad"/><rect x="2149.91" y="332.18" width="10.6" height="10.21" fill="#d3c066"/><rect x="2149.91" y="385.19" width="10.6" height="1" fill="rgba(255,255,255,0.35)"/><rect x="2149.91" y="367.24" width="10.6" height="1" fill="rgba(255,255,255,0.35)"/><rect x="2149.91" y="346.67" width="10.6" height="1" fill="rgba(255,255,255,0.35)"/><rect x="2149.91" y="342.39" width="10.6" height="1" fill="rgba(255,255,255,0.35)"/><rect x="2164.75" y="370.86" width="10.6" height="186.84" fill="#6fb19a"/><rect x="2164.75" y="352.76" width="10.6" height="18.11" fill="#6a92be"/><rect x="2164.75" y="348.15" width="10.6" height="4.61" fill="#c86682"/><rect x="2164.75" y="339.59" width="10.6" height="8.56" fill="#8b72b4"/><rect x="2164.75" y="334.65" width="10.6" height="4.94" fill="#c28fad"/><rect x="2164.75" y="332.18" width="10.6" height="2.47" fill="#d3c066"/><rect x="2164.75" y="370.86" width="10.6" height="1" fill="rgba(255,255,255,0.35)"/><rect x="2164.75" y="352.76" width="10.6" height="1" fill="rgba(255,255,255,0.35)"/><rect x="2164.75" y="348.15" width="10.6" height="1" fill="rgba(255,255,255,0.35)"/><rect x="2164.75" y="339.59" width="10.6" height="1" fill="rgba(255,255,255,0.35)"/><rect x="2164.75" y="334.65" width="10.6" height="1" fill="rgba(255,255,255,0.35)"/><rect x="2179.59" y="398.85" width="10.6" height="158.85" fill="#6fb19a"/><rect x="2179.59" y="383.21" width="10.6" height="15.64" fill="#6a92be"/><rect x="2179.59" y="378.77" width="10.6" height="4.44" fill="#c86682"/><rect x="2179.59" y="374.65" width="10.6" height="4.12" fill="#c28fad"/><rect x="2179.59" y="370.53" width="10.6" height="4.12" fill="#d3c066"/><rect x="2179.59" y="398.85" width="10.6" height="1" fill="rgba(255,255,255,0.35)"/><rect x="2179.59" y="383.21" width="10.6" height="1" fill="rgba(255,255,255,0.35)"/><rect x="2179.59" y="378.77" width="10.6" height="1" fill="rgba(255,255,255,0.35)"/><rect x="2179.59" y="374.65" width="10.6" height="1" fill="rgba(255,255,255,0.35)"/><rect x="2194.43" y="394.40" width="10.6" height="163.30" fill="#6fb19a"/><rect x="2194.43" y="375.80" width="10.6" height="18.60" fill="#6a92be"/><rect x="2194.43" y="369.71" width="10.6" height="6.09" fill="#c86682"/><rect x="2194.43" y="349.47" width="10.6" height="20.25" fill="#8b72b4"/><rect x="2194.43" y="342.88" width="10.6" height="6.58" fill="#c28fad"/><rect x="2194.43" y="337.94" width="10.6" height="4.94" fill="#d3c066"/><rect x="2194.43" y="394.40" width="10.6" height="1" fill="rgba(255,255,255,0.35)"/><rect x="2194.43" y="375.80" width="10.6" height="1" fill="rgba(255,255,255,0.35)"/><rect x="2194.43" y="369.71" width="10.6" height="1" fill="rgba(255,255,255,0.35)"/><rect x="2194.43" y="349.47" width="10.6" height="1" fill="rgba(255,255,255,0.35)"/><rect x="2194.43" y="342.88" width="10.6" height="1" fill="rgba(255,255,255,0.35)"/><rect x="2209.27" y="391.11" width="10.6" height="166.59" fill="#6fb19a"/><rect x="2209.27" y="372.02" width="10.6" height="19.09" fill="#6a92be"/><rect x="2209.27" y="365.93" width="10.6" height="6.09" fill="#c86682"/><rect x="2209.27" y="361.81" width="10.6" height="4.12" fill="#c28fad"/><rect x="2209.27" y="357.37" width="10.6" height="4.44" fill="#d3c066"/><rect x="2209.27" y="391.11" width="10.6" height="1" fill="rgba(255,255,255,0.35)"/><rect x="2209.27" y="372.02" width="10.6" height="1" fill="rgba(255,255,255,0.35)"/><rect x="2209.27" y="365.93" width="10.6" height="1" fill="rgba(255,255,255,0.35)"/><rect x="2209.27" y="361.81" width="10.6" height="1" fill="rgba(255,255,255,0.35)"/><rect x="2224.12" y="376.30" width="10.6" height="181.40" fill="#6fb19a"/><rect x="2224.12" y="358.85" width="10.6" height="17.45" fill="#6a92be"/><rect x="2224.12" y="355.72" width="10.6" height="3.13" fill="#c86682"/><rect x="2224.12" y="351.60" width="10.6" height="4.12" fill="#c28fad"/><rect x="2224.12" y="347.00" width="10.6" height="4.61" fill="#d3c066"/><rect x="2224.12" y="376.30" width="10.6" height="1" fill="rgba(255,255,255,0.35)"/><rect x="2224.12" y="358.85" width="10.6" height="1" fill="rgba(255,255,255,0.35)"/><rect x="2224.12" y="355.72" width="10.6" height="1" fill="rgba(255,255,255,0.35)"/><rect x="2224.12" y="351.60" width="10.6" height="1" fill="rgba(255,255,255,0.35)"/><rect x="2238.96" y="340.91" width="10.6" height="216.79" fill="#6fb19a"/><rect x="2238.96" y="322.30" width="10.6" height="18.60" fill="#6a92be"/><rect x="2238.96" y="317.37" width="10.6" height="4.94" fill="#c86682"/><rect x="2238.96" y="298.77" width="10.6" height="18.60" fill="#8b72b4"/><rect x="2238.96" y="293.99" width="10.6" height="4.77" fill="#c28fad"/><rect x="2238.96" y="291.03" width="10.6" height="2.96" fill="#d3c066"/><rect x="2238.96" y="340.91" width="10.6" height="1" fill="rgba(255,255,255,0.35)"/><rect x="2238.96" y="322.30" width="10.6" height="1" fill="rgba(255,255,255,0.35)"/><rect x="2238.96" y="317.37" width="10.6" height="1" fill="rgba(255,255,255,0.35)"/><rect x="2238.96" y="298.77" width="10.6" height="1" fill="rgba(255,255,255,0.35)"/><rect x="2238.96" y="293.99" width="10.6" height="1" fill="rgba(255,255,255,0.35)"/><rect x="2253.80" y="390.12" width="10.6" height="167.58" fill="#6fb19a"/><rect x="2253.80" y="370.04" width="10.6" height="20.08" fill="#6a92be"/><rect x="2253.80" y="365.60" width="10.6" height="4.44" fill="#c86682"/><rect x="2253.80" y="352.76" width="10.6" height="12.84" fill="#8b72b4"/><rect x="2253.80" y="348.64" width="10.6" height="4.12" fill="#c28fad"/><rect x="2253.80" y="346.50" width="10.6" height="2.14" fill="#d3c066"/><rect x="2253.80" y="390.12" width="10.6" height="1" fill="rgba(255,255,255,0.35)"/><rect x="2253.80" y="370.04" width="10.6" height="1" fill="rgba(255,255,255,0.35)"/><rect x="2253.80" y="365.60" width="10.6" height="1" fill="rgba(255,255,255,0.35)"/><rect x="2253.80" y="352.76" width="10.6" height="1" fill="rgba(255,255,255,0.35)"/><rect x="2253.80" y="348.64" width="10.6" height="1" fill="rgba(255,255,255,0.35)"/><rect x="2268.64" y="411.69" width="10.6" height="146.01" fill="#6fb19a"/><rect x="2268.64" y="393.91" width="10.6" height="17.78" fill="#6a92be"/><rect x="2268.64" y="384.86" width="10.6" height="9.05" fill="#c86682"/><rect x="2268.64" y="380.41" width="10.6" height="4.44" fill="#c28fad"/><rect x="2268.64" y="374.16" width="10.6" height="6.26" fill="#d3c066"/><rect x="2268.64" y="411.69" width="10.6" height="1" fill="rgba(255,255,255,0.35)"/><rect x="2268.64" y="393.91" width="10.6" height="1" fill="rgba(255,255,255,0.35)"/><rect x="2268.64" y="384.86" width="10.6" height="1" fill="rgba(255,255,255,0.35)"/><rect x="2268.64" y="380.41" width="10.6" height="1" fill="rgba(255,255,255,0.35)"/><rect x="2283.48" y="387.65" width="10.6" height="170.05" fill="#6fb19a"/><rect x="2283.48" y="370.04" width="10.6" height="17.61" fill="#6a92be"/><rect x="2283.48" y="351.60" width="10.6" height="18.44" fill="#c86682"/><rect x="2283.48" y="336.30" width="10.6" height="15.31" fill="#8b72b4"/><rect x="2283.48" y="330.53" width="10.6" height="5.76" fill="#c28fad"/><rect x="2283.48" y="323.13" width="10.6" height="7.41" fill="#d3c066"/><rect x="2283.48" y="387.65" width="10.6" height="1" fill="rgba(255,255,255,0.35)"/><rect x="2283.48" y="370.04" width="10.6" height="1" fill="rgba(255,255,255,0.35)"/><rect x="2283.48" y="351.60" width="10.6" height="1" fill="rgba(255,255,255,0.35)"/><rect x="2283.48" y="336.30" width="10.6" height="1" fill="rgba(255,255,255,0.35)"/><rect x="2283.48" y="330.53" width="10.6" height="1" fill="rgba(255,255,255,0.35)"/><rect x="2298.33" y="354.73" width="10.6" height="202.97" fill="#6fb19a"/><rect x="2298.33" y="338.44" width="10.6" height="16.30" fill="#6a92be"/><rect x="2298.33" y="328.07" width="10.6" height="10.37" fill="#c86682"/><rect x="2298.33" y="318.68" width="10.6" height="9.38" fill="#8b72b4"/><rect x="2298.33" y="315.72" width="10.6" height="2.96" fill="#c28fad"/><rect x="2298.33" y="311.28" width="10.6" height="4.44" fill="#d3c066"/><rect x="2298.33" y="354.73" width="10.6" height="1" fill="rgba(255,255,255,0.35)"/><rect x="2298.33" y="338.44" width="10.6" height="1" fill="rgba(255,255,255,0.35)"/><rect x="2298.33" y="328.07" width="10.6" height="1" fill="rgba(255,255,255,0.35)"/><rect x="2298.33" y="318.68" width="10.6" height="1" fill="rgba(255,255,255,0.35)"/><rect x="2298.33" y="315.72" width="10.6" height="1" fill="rgba(255,255,255,0.35)"/><rect x="2313.17" y="391.93" width="10.6" height="165.77" fill="#6fb19a"/><rect x="2313.17" y="374.49" width="10.6" height="17.45" fill="#6a92be"/><rect x="2313.17" y="366.75" width="10.6" height="7.74" fill="#c86682"/><rect x="2313.17" y="359.01" width="10.6" height="7.74" fill="#8b72b4"/><rect x="2313.17" y="354.90" width="10.6" height="4.12" fill="#c28fad"/><rect x="2313.17" y="351.11" width="10.6" height="3.79" fill="#d3c066"/><rect x="2313.17" y="391.93" width="10.6" height="1" fill="rgba(255,255,255,0.35)"/><rect x="2313.17" y="374.49" width="10.6" height="1" fill="rgba(255,255,255,0.35)"/><rect x="2313.17" y="366.75" width="10.6" height="1" fill="rgba(255,255,255,0.35)"/><rect x="2313.17" y="359.01" width="10.6" height="1" fill="rgba(255,255,255,0.35)"/><rect x="2313.17" y="354.90" width="10.6" height="1" fill="rgba(255,255,255,0.35)"/><rect x="2328.01" y="391.44" width="10.6" height="166.26" fill="#6fb19a"/><rect x="2328.01" y="375.80" width="10.6" height="15.64" fill="#6a92be"/><rect x="2328.01" y="357.20" width="10.6" height="18.60" fill="#c86682"/><rect x="2328.01" y="352.76" width="10.6" height="4.44" fill="#8b72b4"/><rect x="2328.01" y="347.82" width="10.6" height="4.94" fill="#c28fad"/><rect x="2328.01" y="339.26" width="10.6" height="8.56" fill="#d3c066"/><rect x="2328.01" y="391.44" width="10.6" height="1" fill="rgba(255,255,255,0.35)"/><rect x="2328.01" y="375.80" width="10.6" height="1" fill="rgba(255,255,255,0.35)"/><rect x="2328.01" y="357.20" width="10.6" height="1" fill="rgba(255,255,255,0.35)"/><rect x="2328.01" y="352.76" width="10.6" height="1" fill="rgba(255,255,255,0.35)"/><rect x="2328.01" y="347.82" width="10.6" height="1" fill="rgba(255,255,255,0.35)"/><rect x="2342.85" y="376.30" width="10.6" height="181.40" fill="#6fb19a"/><rect x="2342.85" y="360.16" width="10.6" height="16.13" fill="#6a92be"/><rect x="2342.85" y="351.44" width="10.6" height="8.72" fill="#c86682"/><rect x="2342.85" y="340.74" width="10.6" height="10.70" fill="#8b72b4"/><rect x="2342.85" y="334.65" width="10.6" height="6.09" fill="#c28fad"/><rect x="2342.85" y="330.86" width="10.6" height="3.79" fill="#d3c066"/><rect x="2342.85" y="376.30" width="10.6" height="1" fill="rgba(255,255,255,0.35)"/><rect x="2342.85" y="360.16" width="10.6" height="1" fill="rgba(255,255,255,0.35)"/><rect x="2342.85" y="351.44" width="10.6" height="1" fill="rgba(255,255,255,0.35)"/><rect x="2342.85" y="340.74" width="10.6" height="1" fill="rgba(255,255,255,0.35)"/><rect x="2342.85" y="334.65" width="10.6" height="1" fill="rgba(255,255,255,0.35)"/><rect x="2357.69" y="407.41" width="10.6" height="150.29" fill="#6fb19a"/><rect x="2357.69" y="387.82" width="10.6" height="19.59" fill="#6a92be"/><rect x="2357.69" y="377.12" width="10.6" height="10.70" fill="#c86682"/><rect x="2357.69" y="371.69" width="10.6" height="5.43" fill="#8b72b4"/><rect x="2357.69" y="367.57" width="10.6" height="4.12" fill="#c28fad"/><rect x="2357.69" y="362.96" width="10.6" height="4.61" fill="#d3c066"/><rect x="2357.69" y="407.41" width="10.6" height="1" fill="rgba(255,255,255,0.35)"/><rect x="2357.69" y="387.82" width="10.6" height="1" fill="rgba(255,255,255,0.35)"/><rect x="2357.69" y="377.12" width="10.6" height="1" fill="rgba(255,255,255,0.35)"/><rect x="2357.69" y="371.69" width="10.6" height="1" fill="rgba(255,255,255,0.35)"/><rect x="2357.69" y="367.57" width="10.6" height="1" fill="rgba(255,255,255,0.35)"/><rect x="2372.54" y="386.50" width="10.6" height="171.20" fill="#6fb19a"/><rect x="2372.54" y="370.53" width="10.6" height="15.97" fill="#6a92be"/><rect x="2372.54" y="364.77" width="10.6" height="5.76" fill="#c86682"/><rect x="2372.54" y="357.70" width="10.6" height="7.08" fill="#8b72b4"/><rect x="2372.54" y="353.09" width="10.6" height="4.61" fill="#c28fad"/><rect x="2372.54" y="348.15" width="10.6" height="4.94" fill="#d3c066"/><rect x="2372.54" y="386.50" width="10.6" height="1" fill="rgba(255,255,255,0.35)"/><rect x="2372.54" y="370.53" width="10.6" height="1" fill="rgba(255,255,255,0.35)"/><rect x="2372.54" y="364.77" width="10.6" height="1" fill="rgba(255,255,255,0.35)"/><rect x="2372.54" y="357.70" width="10.6" height="1" fill="rgba(255,255,255,0.35)"/><rect x="2372.54" y="353.09" width="10.6" height="1" fill="rgba(255,255,255,0.35)"/><rect x="2387.38" y="401.81" width="10.6" height="155.89" fill="#6fb19a"/><rect x="2387.38" y="385.35" width="10.6" height="16.46" fill="#6a92be"/><rect x="2387.38" y="378.77" width="10.6" height="6.58" fill="#c86682"/><rect x="2387.38" y="375.80" width="10.6" height="2.96" fill="#8b72b4"/><rect x="2387.38" y="371.69" width="10.6" height="4.12" fill="#c28fad"/><rect x="2387.38" y="367.08" width="10.6" height="4.61" fill="#d3c066"/><rect x="2387.38" y="401.81" width="10.6" height="1" fill="rgba(255,255,255,0.35)"/><rect x="2387.38" y="385.35" width="10.6" height="1" fill="rgba(255,255,255,0.35)"/><rect x="2387.38" y="378.77" width="10.6" height="1" fill="rgba(255,255,255,0.35)"/><rect x="2387.38" y="375.80" width="10.6" height="1" fill="rgba(255,255,255,0.35)"/><rect x="2387.38" y="371.69" width="10.6" height="1" fill="rgba(255,255,255,0.35)"/><rect x="2402.22" y="407.08" width="10.6" height="150.62" fill="#6fb19a"/><rect x="2402.22" y="391.11" width="10.6" height="15.97" fill="#6a92be"/><rect x="2402.22" y="385.68" width="10.6" height="5.43" fill="#c86682"/><rect x="2402.22" y="376.63" width="10.6" height="9.05" fill="#8b72b4"/><rect x="2402.22" y="371.19" width="10.6" height="5.43" fill="#c28fad"/><rect x="2402.22" y="366.75" width="10.6" height="4.44" fill="#d3c066"/><rect x="2402.22" y="407.08" width="10.6" height="1" fill="rgba(255,255,255,0.35)"/><rect x="2402.22" y="391.11" width="10.6" height="1" fill="rgba(255,255,255,0.35)"/><rect x="2402.22" y="385.68" width="10.6" height="1" fill="rgba(255,255,255,0.35)"/><rect x="2402.22" y="376.63" width="10.6" height="1" fill="rgba(255,255,255,0.35)"/><rect x="2402.22" y="371.19" width="10.6" height="1" fill="rgba(255,255,255,0.35)"/><rect x="2417.06" y="393.09" width="10.6" height="164.61" fill="#6fb19a"/><rect x="2417.06" y="374.65" width="10.6" height="18.44" fill="#6a92be"/><rect x="2417.06" y="362.63" width="10.6" height="12.02" fill="#c86682"/><rect x="2417.06" y="353.09" width="10.6" height="9.55" fill="#8b72b4"/><rect x="2417.06" y="347.82" width="10.6" height="5.27" fill="#c28fad"/><rect x="2417.06" y="343.21" width="10.6" height="4.61" fill="#d3c066"/><rect x="2417.06" y="393.09" width="10.6" height="1" fill="rgba(255,255,255,0.35)"/><rect x="2417.06" y="374.65" width="10.6" height="1" fill="rgba(255,255,255,0.35)"/><rect x="2417.06" y="362.63" width="10.6" height="1" fill="rgba(255,255,255,0.35)"/><rect x="2417.06" y="353.09" width="10.6" height="1" fill="rgba(255,255,255,0.35)"/><rect x="2417.06" y="347.82" width="10.6" height="1" fill="rgba(255,255,255,0.35)"/><rect x="2431.90" y="383.21" width="10.6" height="174.49" fill="#6fb19a"/><rect x="2431.90" y="366.75" width="10.6" height="16.46" fill="#6a92be"/><rect x="2431.90" y="351.11" width="10.6" height="15.64" fill="#c86682"/><rect x="2431.90" y="343.70" width="10.6" height="7.41" fill="#8b72b4"/><rect x="2431.90" y="338.77" width="10.6" height="4.94" fill="#c28fad"/><rect x="2431.90" y="332.18" width="10.6" height="6.58" fill="#d3c066"/><rect x="2431.90" y="383.21" width="10.6" height="1" fill="rgba(255,255,255,0.35)"/><rect x="2431.90" y="366.75" width="10.6" height="1" fill="rgba(255,255,255,0.35)"/><rect x="2431.90" y="351.11" width="10.6" height="1" fill="rgba(255,255,255,0.35)"/><rect x="2431.90" y="343.70" width="10.6" height="1" fill="rgba(255,255,255,0.35)"/><rect x="2431.90" y="338.77" width="10.6" height="1" fill="rgba(255,255,255,0.35)"/><rect x="2446.75" y="380.25" width="10.6" height="177.45" fill="#6fb19a"/><rect x="2446.75" y="363.95" width="10.6" height="16.30" fill="#6a92be"/><rect x="2446.75" y="360.49" width="10.6" height="3.46" fill="#c86682"/><rect x="2446.75" y="349.47" width="10.6" height="11.03" fill="#8b72b4"/><rect x="2446.75" y="345.35" width="10.6" height="4.12" fill="#c28fad"/><rect x="2446.75" y="342.88" width="10.6" height="2.47" fill="#d3c066"/><rect x="2446.75" y="380.25" width="10.6" height="1" fill="rgba(255,255,255,0.35)"/><rect x="2446.75" y="363.95" width="10.6" height="1" fill="rgba(255,255,255,0.35)"/><rect x="2446.75" y="360.49" width="10.6" height="1" fill="rgba(255,255,255,0.35)"/><rect x="2446.75" y="349.47" width="10.6" height="1" fill="rgba(255,255,255,0.35)"/><rect x="2446.75" y="345.35" width="10.6" height="1" fill="rgba(255,255,255,0.35)"/><rect x="2461.59" y="369.55" width="10.6" height="188.15" fill="#6fb19a"/><rect x="2461.59" y="351.93" width="10.6" height="17.61" fill="#6a92be"/><rect x="2461.59" y="347.33" width="10.6" height="4.61" fill="#c86682"/><rect x="2461.59" y="342.88" width="10.6" height="4.44" fill="#c28fad"/><rect x="2461.59" y="338.27" width="10.6" height="4.61" fill="#d3c066"/><rect x="2461.59" y="369.55" width="10.6" height="1" fill="rgba(255,255,255,0.35)"/><rect x="2461.59" y="351.93" width="10.6" height="1" fill="rgba(255,255,255,0.35)"/><rect x="2461.59" y="347.33" width="10.6" height="1" fill="rgba(255,255,255,0.35)"/><rect x="2461.59" y="342.88" width="10.6" height="1" fill="rgba(255,255,255,0.35)"/><rect x="2476.43" y="382.39" width="10.6" height="175.31" fill="#6fb19a"/><rect x="2476.43" y="364.61" width="10.6" height="17.78" fill="#6a92be"/><rect x="2476.43" y="356.54" width="10.6" height="8.07" fill="#c86682"/><rect x="2476.43" y="348.64" width="10.6" height="7.90" fill="#8b72b4"/><rect x="2476.43" y="342.88" width="10.6" height="5.76" fill="#c28fad"/><rect x="2476.43" y="337.61" width="10.6" height="5.27" fill="#d3c066"/><rect x="2476.43" y="382.39" width="10.6" height="1" fill="rgba(255,255,255,0.35)"/><rect x="2476.43" y="364.61" width="10.6" height="1" fill="rgba(255,255,255,0.35)"/><rect x="2476.43" y="356.54" width="10.6" height="1" fill="rgba(255,255,255,0.35)"/><rect x="2476.43" y="348.64" width="10.6" height="1" fill="rgba(255,255,255,0.35)"/><rect x="2476.43" y="342.88" width="10.6" height="1" fill="rgba(255,255,255,0.35)"/><rect x="2491.27" y="354.73" width="10.6" height="202.97" fill="#6fb19a"/><rect x="2491.27" y="337.61" width="10.6" height="17.12" fill="#6a92be"/><rect x="2491.27" y="333.33" width="10.6" height="4.28" fill="#c86682"/><rect x="2491.27" y="320.66" width="10.6" height="12.67" fill="#8b72b4"/><rect x="2491.27" y="318.19" width="10.6" height="2.47" fill="#c28fad"/><rect x="2491.27" y="316.05" width="10.6" height="2.14" fill="#d3c066"/><rect x="2491.27" y="354.73" width="10.6" height="1" fill="rgba(255,255,255,0.35)"/><rect x="2491.27" y="337.61" width="10.6" height="1" fill="rgba(255,255,255,0.35)"/><rect x="2491.27" y="333.33" width="10.6" height="1" fill="rgba(255,255,255,0.35)"/><rect x="2491.27" y="320.66" width="10.6" height="1" fill="rgba(255,255,255,0.35)"/><rect x="2491.27" y="318.19" width="10.6" height="1" fill="rgba(255,255,255,0.35)"/><rect x="2506.11" y="353.91" width="10.6" height="203.79" fill="#6fb19a"/><rect x="2506.11" y="333.50" width="10.6" height="20.41" fill="#6a92be"/><rect x="2506.11" y="326.91" width="10.6" height="6.58" fill="#c86682"/><rect x="2506.11" y="321.98" width="10.6" height="4.94" fill="#c28fad"/><rect x="2506.11" y="316.87" width="10.6" height="5.10" fill="#d3c066"/><rect x="2506.11" y="353.91" width="10.6" height="1" fill="rgba(255,255,255,0.35)"/><rect x="2506.11" y="333.50" width="10.6" height="1" fill="rgba(255,255,255,0.35)"/><rect x="2506.11" y="326.91" width="10.6" height="1" fill="rgba(255,255,255,0.35)"/><rect x="2506.11" y="321.98" width="10.6" height="1" fill="rgba(255,255,255,0.35)"/><rect x="2520.96" y="394.24" width="10.6" height="163.46" fill="#6fb19a"/><rect x="2520.96" y="376.63" width="10.6" height="17.61" fill="#6a92be"/><rect x="2520.96" y="366.75" width="10.6" height="9.88" fill="#c86682"/><rect x="2520.96" y="362.30" width="10.6" height="4.44" fill="#c28fad"/><rect x="2520.96" y="355.72" width="10.6" height="6.58" fill="#d3c066"/><rect x="2520.96" y="394.24" width="10.6" height="1" fill="rgba(255,255,255,0.35)"/><rect x="2520.96" y="376.63" width="10.6" height="1" fill="rgba(255,255,255,0.35)"/><rect x="2520.96" y="366.75" width="10.6" height="1" fill="rgba(255,255,255,0.35)"/><rect x="2520.96" y="362.30" width="10.6" height="1" fill="rgba(255,255,255,0.35)"/><rect x="2535.80" y="367.08" width="10.6" height="190.62" fill="#6fb19a"/><rect x="2535.80" y="349.47" width="10.6" height="17.61" fill="#6a92be"/><rect x="2535.80" y="323.46" width="10.6" height="26.01" fill="#c86682"/><rect x="2535.80" y="306.67" width="10.6" height="16.79" fill="#8b72b4"/><rect x="2535.80" y="302.55" width="10.6" height="4.12" fill="#c28fad"/><rect x="2535.80" y="291.03" width="10.6" height="11.52" fill="#d3c066"/><rect x="2535.80" y="367.08" width="10.6" height="1" fill="rgba(255,255,255,0.35)"/><rect x="2535.80" y="349.47" width="10.6" height="1" fill="rgba(255,255,255,0.35)"/><rect x="2535.80" y="323.46" width="10.6" height="1" fill="rgba(255,255,255,0.35)"/><rect x="2535.80" y="306.67" width="10.6" height="1" fill="rgba(255,255,255,0.35)"/><rect x="2535.80" y="302.55" width="10.6" height="1" fill="rgba(255,255,255,0.35)"/><rect x="2550.64" y="389.30" width="10.6" height="168.40" fill="#6fb19a"/><rect x="2550.64" y="371.19" width="10.6" height="18.11" fill="#6a92be"/><rect x="2550.64" y="349.47" width="10.6" height="21.73" fill="#c86682"/><rect x="2550.64" y="344.20" width="10.6" height="5.27" fill="#8b72b4"/><rect x="2550.64" y="338.77" width="10.6" height="5.43" fill="#c28fad"/><rect x="2550.64" y="327.57" width="10.6" height="11.19" fill="#d3c066"/><rect x="2550.64" y="389.30" width="10.6" height="1" fill="rgba(255,255,255,0.35)"/><rect x="2550.64" y="371.19" width="10.6" height="1" fill="rgba(255,255,255,0.35)"/><rect x="2550.64" y="349.47" width="10.6" height="1" fill="rgba(255,255,255,0.35)"/><rect x="2550.64" y="344.20" width="10.6" height="1" fill="rgba(255,255,255,0.35)"/><rect x="2550.64" y="338.77" width="10.6" height="1" fill="rgba(255,255,255,0.35)"/><rect x="2565.48" y="397.53" width="10.6" height="160.17" fill="#6fb19a"/><rect x="2565.48" y="379.92" width="10.6" height="17.61" fill="#6a92be"/><rect x="2565.48" y="368.40" width="10.6" height="11.52" fill="#c86682"/><rect x="2565.48" y="360.16" width="10.6" height="8.23" fill="#8b72b4"/><rect x="2565.48" y="356.05" width="10.6" height="4.12" fill="#c28fad"/><rect x="2565.48" y="353.25" width="10.6" height="2.80" fill="#d3c066"/><rect x="2565.48" y="397.53" width="10.6" height="1" fill="rgba(255,255,255,0.35)"/><rect x="2565.48" y="379.92" width="10.6" height="1" fill="rgba(255,255,255,0.35)"/><rect x="2565.48" y="368.40" width="10.6" height="1" fill="rgba(255,255,255,0.35)"/><rect x="2565.48" y="360.16" width="10.6" height="1" fill="rgba(255,255,255,0.35)"/><rect x="2565.48" y="356.05" width="10.6" height="1" fill="rgba(255,255,255,0.35)"/><rect x="2580.32" y="397.70" width="10.6" height="160.00" fill="#6fb19a"/><rect x="2580.32" y="380.41" width="10.6" height="17.28" fill="#6a92be"/><rect x="2580.32" y="376.63" width="10.6" height="3.79" fill="#c86682"/><rect x="2580.32" y="365.93" width="10.6" height="10.70" fill="#8b72b4"/><rect x="2580.32" y="363.79" width="10.6" height="2.14" fill="#c28fad"/><rect x="2580.32" y="361.48" width="10.6" height="2.30" fill="#d3c066"/><rect x="2580.32" y="397.70" width="10.6" height="1" fill="rgba(255,255,255,0.35)"/><rect x="2580.32" y="380.41" width="10.6" height="1" fill="rgba(255,255,255,0.35)"/><rect x="2580.32" y="376.63" width="10.6" height="1" fill="rgba(255,255,255,0.35)"/><rect x="2580.32" y="365.93" width="10.6" height="1" fill="rgba(255,255,255,0.35)"/><rect x="2580.32" y="363.79" width="10.6" height="1" fill="rgba(255,255,255,0.35)"/><rect x="2595.17" y="408.40" width="10.6" height="149.30" fill="#6fb19a"/><rect x="2595.17" y="390.62" width="10.6" height="17.78" fill="#6a92be"/><rect x="2595.17" y="385.35" width="10.6" height="5.27" fill="#c86682"/><rect x="2595.17" y="381.07" width="10.6" height="4.28" fill="#8b72b4"/><rect x="2595.17" y="377.12" width="10.6" height="3.95" fill="#c28fad"/><rect x="2595.17" y="374.98" width="10.6" height="2.14" fill="#d3c066"/><rect x="2595.17" y="408.40" width="10.6" height="1" fill="rgba(255,255,255,0.35)"/><rect x="2595.17" y="390.62" width="10.6" height="1" fill="rgba(255,255,255,0.35)"/><rect x="2595.17" y="385.35" width="10.6" height="1" fill="rgba(255,255,255,0.35)"/><rect x="2595.17" y="381.07" width="10.6" height="1" fill="rgba(255,255,255,0.35)"/><rect x="2595.17" y="377.12" width="10.6" height="1" fill="rgba(255,255,255,0.35)"/><rect x="2610.01" y="407.41" width="10.6" height="150.29" fill="#6fb19a"/><rect x="2610.01" y="393.09" width="10.6" height="14.32" fill="#6a92be"/><rect x="2610.01" y="382.72" width="10.6" height="10.37" fill="#c86682"/><rect x="2610.01" y="370.86" width="10.6" height="11.85" fill="#8b72b4"/><rect x="2610.01" y="366.75" width="10.6" height="4.12" fill="#c28fad"/><rect x="2610.01" y="363.79" width="10.6" height="2.96" fill="#d3c066"/><rect x="2610.01" y="407.41" width="10.6" height="1" fill="rgba(255,255,255,0.35)"/><rect x="2610.01" y="393.09" width="10.6" height="1" fill="rgba(255,255,255,0.35)"/><rect x="2610.01" y="382.72" width="10.6" height="1" fill="rgba(255,255,255,0.35)"/><rect x="2610.01" y="370.86" width="10.6" height="1" fill="rgba(255,255,255,0.35)"/><rect x="2610.01" y="366.75" width="10.6" height="1" fill="rgba(255,255,255,0.35)"/><rect x="2624.85" y="418.27" width="10.6" height="139.43" fill="#6fb19a"/><rect x="2624.85" y="401.81" width="10.6" height="16.46" fill="#6a92be"/><rect x="2624.85" y="399.34" width="10.6" height="2.47" fill="#c86682"/><rect x="2624.85" y="390.62" width="10.6" height="8.72" fill="#8b72b4"/><rect x="2624.85" y="388.15" width="10.6" height="2.47" fill="#c28fad"/><rect x="2624.85" y="385.68" width="10.6" height="2.47" fill="#d3c066"/><rect x="2624.85" y="418.27" width="10.6" height="1" fill="rgba(255,255,255,0.35)"/><rect x="2624.85" y="401.81" width="10.6" height="1" fill="rgba(255,255,255,0.35)"/><rect x="2624.85" y="399.34" width="10.6" height="1" fill="rgba(255,255,255,0.35)"/><rect x="2624.85" y="390.62" width="10.6" height="1" fill="rgba(255,255,255,0.35)"/><rect x="2624.85" y="388.15" width="10.6" height="1" fill="rgba(255,255,255,0.35)"/><rect x="2639.69" y="367.24" width="10.6" height="190.46" fill="#6fb19a"/><rect x="2639.69" y="351.60" width="10.6" height="15.64" fill="#6a92be"/><rect x="2639.69" y="344.20" width="10.6" height="7.41" fill="#c86682"/><rect x="2639.69" y="335.80" width="10.6" height="8.40" fill="#8b72b4"/><rect x="2639.69" y="331.36" width="10.6" height="4.44" fill="#c28fad"/><rect x="2639.69" y="327.24" width="10.6" height="4.12" fill="#d3c066"/><rect x="2639.69" y="367.24" width="10.6" height="1" fill="rgba(255,255,255,0.35)"/><rect x="2639.69" y="351.60" width="10.6" height="1" fill="rgba(255,255,255,0.35)"/><rect x="2639.69" y="344.20" width="10.6" height="1" fill="rgba(255,255,255,0.35)"/><rect x="2639.69" y="335.80" width="10.6" height="1" fill="rgba(255,255,255,0.35)"/><rect x="2639.69" y="331.36" width="10.6" height="1" fill="rgba(255,255,255,0.35)"/><rect x="2654.53" y="421.89" width="10.6" height="135.81" fill="#6fb19a"/><rect x="2654.53" y="405.10" width="10.6" height="16.79" fill="#6a92be"/><rect x="2654.53" y="402.14" width="10.6" height="2.96" fill="#c86682"/><rect x="2654.53" y="390.62" width="10.6" height="11.52" fill="#8b72b4"/><rect x="2654.53" y="387.65" width="10.6" height="2.96" fill="#c28fad"/><rect x="2654.53" y="385.19" width="10.6" height="2.47" fill="#d3c066"/><rect x="2654.53" y="421.89" width="10.6" height="1" fill="rgba(255,255,255,0.35)"/><rect x="2654.53" y="405.10" width="10.6" height="1" fill="rgba(255,255,255,0.35)"/><rect x="2654.53" y="402.14" width="10.6" height="1" fill="rgba(255,255,255,0.35)"/><rect x="2654.53" y="390.62" width="10.6" height="1" fill="rgba(255,255,255,0.35)"/><rect x="2654.53" y="387.65" width="10.6" height="1" fill="rgba(255,255,255,0.35)"/><rect x="2669.38" y="378.60" width="10.6" height="179.10" fill="#6fb19a"/><rect x="2669.38" y="363.46" width="10.6" height="15.14" fill="#6a92be"/><rect x="2669.38" y="358.02" width="10.6" height="5.43" fill="#c86682"/><rect x="2669.38" y="349.96" width="10.6" height="8.07" fill="#8b72b4"/><rect x="2669.38" y="345.68" width="10.6" height="4.28" fill="#c28fad"/><rect x="2669.38" y="340.08" width="10.6" height="5.60" fill="#d3c066"/><rect x="2669.38" y="378.60" width="10.6" height="1" fill="rgba(255,255,255,0.35)"/><rect x="2669.38" y="363.46" width="10.6" height="1" fill="rgba(255,255,255,0.35)"/><rect x="2669.38" y="358.02" width="10.6" height="1" fill="rgba(255,255,255,0.35)"/><rect x="2669.38" y="349.96" width="10.6" height="1" fill="rgba(255,255,255,0.35)"/><rect x="2669.38" y="345.68" width="10.6" height="1" fill="rgba(255,255,255,0.35)"/><rect x="2684.22" y="397.20" width="10.6" height="160.50" fill="#6fb19a"/><rect x="2684.22" y="380.41" width="10.6" height="16.79" fill="#6a92be"/><rect x="2684.22" y="373.00" width="10.6" height="7.41" fill="#c86682"/><rect x="2684.22" y="363.79" width="10.6" height="9.22" fill="#8b72b4"/><rect x="2684.22" y="359.34" width="10.6" height="4.44" fill="#c28fad"/><rect x="2684.22" y="352.26" width="10.6" height="7.08" fill="#d3c066"/><rect x="2684.22" y="397.20" width="10.6" height="1" fill="rgba(255,255,255,0.35)"/><rect x="2684.22" y="380.41" width="10.6" height="1" fill="rgba(255,255,255,0.35)"/><rect x="2684.22" y="373.00" width="10.6" height="1" fill="rgba(255,255,255,0.35)"/><rect x="2684.22" y="363.79" width="10.6" height="1" fill="rgba(255,255,255,0.35)"/><rect x="2684.22" y="359.34" width="10.6" height="1" fill="rgba(255,255,255,0.35)"/><rect x="2699.06" y="405.10" width="10.6" height="152.60" fill="#6fb19a"/><rect x="2699.06" y="388.64" width="10.6" height="16.46" fill="#6a92be"/><rect x="2699.06" y="379.92" width="10.6" height="8.72" fill="#c86682"/><rect x="2699.06" y="374.16" width="10.6" height="5.76" fill="#c28fad"/><rect x="2699.06" y="366.75" width="10.6" height="7.41" fill="#d3c066"/><rect x="2699.06" y="405.10" width="10.6" height="1" fill="rgba(255,255,255,0.35)"/><rect x="2699.06" y="388.64" width="10.6" height="1" fill="rgba(255,255,255,0.35)"/><rect x="2699.06" y="379.92" width="10.6" height="1" fill="rgba(255,255,255,0.35)"/><rect x="2699.06" y="374.16" width="10.6" height="1" fill="rgba(255,255,255,0.35)"/><rect x="2713.90" y="383.54" width="10.6" height="174.16" fill="#6fb19a"/><rect x="2713.90" y="367.57" width="10.6" height="15.97" fill="#6a92be"/><rect x="2713.90" y="360.66" width="10.6" height="6.91" fill="#c86682"/><rect x="2713.90" y="349.14" width="10.6" height="11.52" fill="#8b72b4"/><rect x="2713.90" y="345.84" width="10.6" height="3.29" fill="#c28fad"/><rect x="2713.90" y="339.26" width="10.6" height="6.58" fill="#d3c066"/><rect x="2713.90" y="383.54" width="10.6" height="1" fill="rgba(255,255,255,0.35)"/><rect x="2713.90" y="367.57" width="10.6" height="1" fill="rgba(255,255,255,0.35)"/><rect x="2713.90" y="360.66" width="10.6" height="1" fill="rgba(255,255,255,0.35)"/><rect x="2713.90" y="349.14" width="10.6" height="1" fill="rgba(255,255,255,0.35)"/><rect x="2713.90" y="345.84" width="10.6" height="1" fill="rgba(255,255,255,0.35)"/><rect x="2728.74" y="388.64" width="10.6" height="169.06" fill="#6fb19a"/><rect x="2728.74" y="373.33" width="10.6" height="15.31" fill="#6a92be"/><rect x="2728.74" y="367.57" width="10.6" height="5.76" fill="#c86682"/><rect x="2728.74" y="360.99" width="10.6" height="6.58" fill="#c28fad"/><rect x="2728.74" y="358.85" width="10.6" height="2.14" fill="#d3c066"/><rect x="2728.74" y="388.64" width="10.6" height="1" fill="rgba(255,255,255,0.35)"/><rect x="2728.74" y="373.33" width="10.6" height="1" fill="rgba(255,255,255,0.35)"/><rect x="2728.74" y="367.57" width="10.6" height="1" fill="rgba(255,255,255,0.35)"/><rect x="2728.74" y="360.99" width="10.6" height="1" fill="rgba(255,255,255,0.35)"/><rect x="2743.59" y="398.85" width="10.6" height="158.85" fill="#6fb19a"/><rect x="2743.59" y="383.21" width="10.6" height="15.64" fill="#6a92be"/><rect x="2743.59" y="376.13" width="10.6" height="7.08" fill="#c86682"/><rect x="2743.59" y="368.72" width="10.6" height="7.41" fill="#8b72b4"/><rect x="2743.59" y="362.96" width="10.6" height="5.76" fill="#c28fad"/><rect x="2743.59" y="359.67" width="10.6" height="3.29" fill="#d3c066"/><rect x="2743.59" y="398.85" width="10.6" height="1" fill="rgba(255,255,255,0.35)"/><rect x="2743.59" y="383.21" width="10.6" height="1" fill="rgba(255,255,255,0.35)"/><rect x="2743.59" y="376.13" width="10.6" height="1" fill="rgba(255,255,255,0.35)"/><rect x="2743.59" y="368.72" width="10.6" height="1" fill="rgba(255,255,255,0.35)"/><rect x="2743.59" y="362.96" width="10.6" height="1" fill="rgba(255,255,255,0.35)"/><rect x="2758.43" y="381.23" width="10.6" height="176.47" fill="#6fb19a"/><rect x="2758.43" y="361.81" width="10.6" height="19.42" fill="#6a92be"/><rect x="2758.43" y="348.64" width="10.6" height="13.17" fill="#c86682"/><rect x="2758.43" y="340.74" width="10.6" height="7.90" fill="#8b72b4"/><rect x="2758.43" y="333.83" width="10.6" height="6.91" fill="#c28fad"/><rect x="2758.43" y="328.89" width="10.6" height="4.94" fill="#d3c066"/><rect x="2758.43" y="381.23" width="10.6" height="1" fill="rgba(255,255,255,0.35)"/><rect x="2758.43" y="361.81" width="10.6" height="1" fill="rgba(255,255,255,0.35)"/><rect x="2758.43" y="348.64" width="10.6" height="1" fill="rgba(255,255,255,0.35)"/><rect x="2758.43" y="340.74" width="10.6" height="1" fill="rgba(255,255,255,0.35)"/><rect x="2758.43" y="333.83" width="10.6" height="1" fill="rgba(255,255,255,0.35)"/><rect x="2773.27" y="368.72" width="10.6" height="188.98" fill="#6fb19a"/><rect x="2773.27" y="348.31" width="10.6" height="20.41" fill="#6a92be"/><rect x="2773.27" y="333.50" width="10.6" height="14.81" fill="#c86682"/><rect x="2773.27" y="328.56" width="10.6" height="4.94" fill="#8b72b4"/><rect x="2773.27" y="322.30" width="10.6" height="6.26" fill="#c28fad"/><rect x="2773.27" y="316.05" width="10.6" height="6.26" fill="#d3c066"/><rect x="2773.27" y="368.72" width="10.6" height="1" fill="rgba(255,255,255,0.35)"/><rect x="2773.27" y="348.31" width="10.6" height="1" fill="rgba(255,255,255,0.35)"/><rect x="2773.27" y="333.50" width="10.6" height="1" fill="rgba(255,255,255,0.35)"/><rect x="2773.27" y="328.56" width="10.6" height="1" fill="rgba(255,255,255,0.35)"/><rect x="2773.27" y="322.30" width="10.6" height="1" fill="rgba(255,255,255,0.35)"/><rect x="2788.11" y="373.33" width="10.6" height="184.37" fill="#6fb19a"/><rect x="2788.11" y="359.67" width="10.6" height="13.66" fill="#6a92be"/><rect x="2788.11" y="356.54" width="10.6" height="3.13" fill="#c86682"/><rect x="2788.11" y="340.41" width="10.6" height="16.13" fill="#8b72b4"/><rect x="2788.11" y="335.80" width="10.6" height="4.61" fill="#c28fad"/><rect x="2788.11" y="334.16" width="10.6" height="1.65" fill="#d3c066"/><rect x="2788.11" y="373.33" width="10.6" height="1" fill="rgba(255,255,255,0.35)"/><rect x="2788.11" y="359.67" width="10.6" height="1" fill="rgba(255,255,255,0.35)"/><rect x="2788.11" y="356.54" width="10.6" height="1" fill="rgba(255,255,255,0.35)"/><rect x="2788.11" y="340.41" width="10.6" height="1" fill="rgba(255,255,255,0.35)"/><rect x="2788.11" y="335.80" width="10.6" height="1" fill="rgba(255,255,255,0.35)"/><rect x="2802.95" y="352.76" width="10.6" height="204.94" fill="#6fb19a"/><rect x="2802.95" y="339.26" width="10.6" height="13.50" fill="#6a92be"/><rect x="2802.95" y="334.65" width="10.6" height="4.61" fill="#c86682"/><rect x="2802.95" y="328.89" width="10.6" height="5.76" fill="#8b72b4"/><rect x="2802.95" y="319.84" width="10.6" height="9.05" fill="#c28fad"/><rect x="2802.95" y="318.19" width="10.6" height="1.65" fill="#d3c066"/><rect x="2802.95" y="352.76" width="10.6" height="1" fill="rgba(255,255,255,0.35)"/><rect x="2802.95" y="339.26" width="10.6" height="1" fill="rgba(255,255,255,0.35)"/><rect x="2802.95" y="334.65" width="10.6" height="1" fill="rgba(255,255,255,0.35)"/><rect x="2802.95" y="328.89" width="10.6" height="1" fill="rgba(255,255,255,0.35)"/><rect x="2802.95" y="319.84" width="10.6" height="1" fill="rgba(255,255,255,0.35)"/><rect x="2817.80" y="363.46" width="10.6" height="194.24" fill="#6fb19a"/><rect x="2817.80" y="348.15" width="10.6" height="15.31" fill="#6a92be"/><rect x="2817.80" y="342.39" width="10.6" height="5.76" fill="#c86682"/><rect x="2817.80" y="327.74" width="10.6" height="14.65" fill="#8b72b4"/><rect x="2817.80" y="321.98" width="10.6" height="5.76" fill="#c28fad"/><rect x="2817.80" y="319.84" width="10.6" height="2.14" fill="#d3c066"/><rect x="2817.80" y="363.46" width="10.6" height="1" fill="rgba(255,255,255,0.35)"/><rect x="2817.80" y="348.15" width="10.6" height="1" fill="rgba(255,255,255,0.35)"/><rect x="2817.80" y="342.39" width="10.6" height="1" fill="rgba(255,255,255,0.35)"/><rect x="2817.80" y="327.74" width="10.6" height="1" fill="rgba(255,255,255,0.35)"/><rect x="2817.80" y="321.98" width="10.6" height="1" fill="rgba(255,255,255,0.35)"/></svg>
<div style="position:absolute;left:540px;width:201.6px;text-align:right;top:311.0px;font-size:20px;line-height:1;color:#767676;white-space:pre">1.0 min</div>
<div style="position:absolute;left:540px;width:201.6px;text-align:right;top:389.1px;font-size:21px;line-height:1;color:#767676;white-space:pre">40.0 s</div>
<div style="position:absolute;left:540px;width:201.6px;text-align:right;top:468.0px;font-size:21px;line-height:1;color:#767676;white-space:pre">20.0 s</div>
<div style="position:absolute;left:540px;width:201.6px;text-align:right;top:546.9px;font-size:21px;line-height:1;color:#767676;white-space:pre">0 ms</div>
<div style="position:absolute;left:569px;top:390px;width:160px;height:26px;text-align:center;font-size:25px;line-height:26px;color:#333;transform:rotate(-90deg);white-space:pre">CPU Time</div>
<div style="position:absolute;left:1011.0px;width:100px;text-align:center;top:578.5px;font-size:20.6px;line-height:1;color:#767676;white-space:pre">09:35</div>
<div style="position:absolute;left:1354.0px;width:100px;text-align:center;top:578.5px;font-size:20.6px;line-height:1;color:#767676;white-space:pre">09:40</div>
<div style="position:absolute;left:1696.8px;width:100px;text-align:center;top:578.5px;font-size:20.6px;line-height:1;color:#767676;white-space:pre">09:45</div>
<div style="position:absolute;left:2039.0px;width:100px;text-align:center;top:578.5px;font-size:20.6px;line-height:1;color:#767676;white-space:pre">09:50</div>
<div style="position:absolute;left:2381.8px;width:100px;text-align:center;top:578.5px;font-size:20.6px;line-height:1;color:#767676;white-space:pre">09:55</div>
<div style="position:absolute;left:2724.0px;width:100px;text-align:center;top:579.2px;font-size:19.8px;line-height:1;color:#767676;white-space:pre">10:00</div>
<div style="position:absolute;left:617.5px;top:673.9px;font-family:'Liberation Sans', sans-serif;font-size:29.26px;line-height:1;color:#8c8c8c;font-weight:400;white-space:pre;">The following table shows which top 5 queries are contributing the most to load in the current time range. Click one to see details.</div>
<div style="position:absolute;left:617.5px;top:771.2px;font-family:'Liberation Sans', sans-serif;font-size:27.95px;line-height:1;color:#2e2e2e;font-weight:700;white-space:pre;">Total CPU Time</div>
<div style="position:absolute;left:1181.0px;top:771.0px;font-family:'Liberation Sans', sans-serif;font-size:28.25px;line-height:1;color:#2e2e2e;font-weight:700;white-space:pre;">SQL Statement</div>
<div style="position:absolute;left:520px;top:827.7px;width:2408px;height:2px;background:#eeeeee"></div>
<div style="position:absolute;left:520px;top:913.8px;width:2408px;height:2px;background:#eeeeee"></div>
<div style="position:absolute;left:520px;top:1000.0px;width:2408px;height:2px;background:#eeeeee"></div>
<div style="position:absolute;left:520px;top:1086.0px;width:2408px;height:2px;background:#eeeeee"></div>
<div style="position:absolute;left:520px;top:1172.0px;width:2408px;height:2px;background:#eeeeee"></div>
<div style="position:absolute;left:520px;top:1258.0px;width:2408px;height:2px;background:#eeeeee"></div>
<div style="position:absolute;left:520px;top:1346.0px;width:2408px;height:2px;background:#eeeeee"></div>
<div style="position:absolute;left:618.0px;top:858.6px;font-family:'Liberation Sans', sans-serif;font-size:26.64px;line-height:1;color:#595959;font-weight:400;white-space:pre;">10.03 min</div>
<div style="position:absolute;left:776px;top:863.7px;width:364px;height:16px;background:#f5f5f5"></div>
<div style="position:absolute;left:776px;top:863.7px;width:34px;height:16px;background:#64b2ea"></div>
<div style="position:absolute;left:1181.0px;top:860.6px;font-family:'Liberation Mono', monospace;font-size:25.16px;line-height:1;color:#383a42;font-weight:400;white-space:pre;"><span style="color:#9d2ea3">COMMIT</span></div>
<div style="position:absolute;left:618.0px;top:944.6px;font-family:'Liberation Sans', sans-serif;font-size:26.64px;line-height:1;color:#595959;font-weight:400;white-space:pre;">5.16 min</div>
<div style="position:absolute;left:776px;top:949.7px;width:364px;height:16px;background:#f5f5f5"></div>
<div style="position:absolute;left:776px;top:949.7px;width:18px;height:16px;background:#64b2ea"></div>
<div style="position:absolute;left:1181.0px;top:946.6px;font-family:'Liberation Mono', monospace;font-size:25.16px;line-height:1;color:#383a42;font-weight:400;white-space:pre;"><span style="color:#9d2ea3">SELECT</span> <span style="color:#bb8530">count</span> (?) <span style="color:#9d2ea3">AS</span> `num`, <span style="color:#bb8530">sum</span> ( `goodsamount` - `favorablemoney` + `sh…</div>
<div style="position:absolute;left:618.0px;top:1030.6px;font-family:'Liberation Sans', sans-serif;font-size:26.64px;line-height:1;color:#595959;font-weight:400;white-space:pre;">3.34 min</div>
<div style="position:absolute;left:776px;top:1035.7px;width:364px;height:16px;background:#f5f5f5"></div>
<div style="position:absolute;left:776px;top:1035.7px;width:11px;height:16px;background:#64b2ea"></div>
<div style="position:absolute;left:1181.0px;top:1032.6px;font-family:'Liberation Mono', monospace;font-size:25.16px;line-height:1;color:#383a42;font-weight:400;white-space:pre;"><span style="color:#9d2ea3">SELECT</span> <span style="color:#bb8530">count</span> (?) <span style="color:#9d2ea3">AS</span> `num`, <span style="color:#bb8530">sum</span> (`number`) <span style="color:#9d2ea3">AS</span> `itemnum`, <span style="color:#bb8530">sum</span> (`price` * …</div>
<div style="position:absolute;left:618.0px;top:1116.6px;font-family:'Liberation Sans', sans-serif;font-size:26.64px;line-height:1;color:#595959;font-weight:400;white-space:pre;">2.80 min</div>
<div style="position:absolute;left:776px;top:1121.7px;width:364px;height:16px;background:#f5f5f5"></div>
<div style="position:absolute;left:776px;top:1121.7px;width:9.6px;height:16px;background:#64b2ea"></div>
<div style="position:absolute;left:1181.0px;top:1118.6px;font-family:'Liberation Mono', monospace;font-size:25.16px;line-height:1;color:#383a42;font-weight:400;white-space:pre;"><span style="color:#9d2ea3">SELECT</span> `itemid`, `userid`, `biztype`, `isdelete`, `certifystatus`, `isd…</div>
<div style="position:absolute;left:618.0px;top:1202.6px;font-family:'Liberation Sans', sans-serif;font-size:26.64px;line-height:1;color:#595959;font-weight:400;white-space:pre;">2.74 min</div>
<div style="position:absolute;left:776px;top:1207.7px;width:364px;height:16px;background:#f5f5f5"></div>
<div style="position:absolute;left:776px;top:1207.7px;width:8.5px;height:16px;background:#64b2ea"></div>
<div style="position:absolute;left:1181.0px;top:1204.6px;font-family:'Liberation Mono', monospace;font-size:25.16px;line-height:1;color:#383a42;font-weight:400;white-space:pre;"><span style="color:#9d2ea3">SELECT</span> `orderid`, `shopid`, `shopname`, `shopkeeperid`, `sellernickname…</div>
<div style="position:absolute;left:618.0px;top:1288.6px;font-family:'Liberation Sans', sans-serif;font-size:26.64px;line-height:1;color:#595959;font-weight:400;white-space:pre;">1.78 hour</div>
<div style="position:absolute;left:776px;top:1293.7px;width:364px;height:16px;background:#f5f5f5"></div>
<div style="position:absolute;left:776px;top:1293.7px;width:364px;height:16px;background:#64b2ea"></div>
<div style="position:absolute;left:1181.5px;top:1291.4px;font-family:'Liberation Sans', sans-serif;font-size:26.6px;line-height:1;color:#a3a3a3;font-weight:400;white-space:pre;font-style:italic;">Other Statements</div>
<svg style="left:1394.2px;top:1290.4px" width="28" height="28"><g fill="none" stroke="#a3a3a3" stroke-width="1.7"><circle cx="14" cy="14" r="11.6"/><path d="M10.8 11.2 C10.8 6.8 17.2 6.8 17.2 11 C17.2 13.6 14 14 14 17.2"/></g><circle cx="14" cy="20.6" r="1.2" fill="#a3a3a3"/></svg>
<div style="position:absolute;left:581px;top:913px;width:1801px;height:99px;border:18px solid #e83e28;border-radius:18px"></div>
<svg style="left:2950px;top:18px" width="42" height="38" viewBox="0 0 42 38">
<circle cx="17" cy="15.5" r="9.5" fill="none" stroke="#808080" stroke-width="4.5"/>
<path d="M24 22.5 L29 27.5" stroke="#707070" stroke-width="3.5"/>
<path d="M27 25.5 L33 31.5" stroke="#a57fd6" stroke-width="6" stroke-linecap="round"/>
</svg>
<svg style="left:2955px;top:102px" width="36" height="36" viewBox="0 0 36 36">
<defs><linearGradient id="tg" x1="0" y1="0" x2="0" y2="1"><stop offset="0" stop-color="#7aa4ea"/><stop offset="1" stop-color="#4f78cf"/></linearGradient></defs>
<path d="M18 2 H31 Q34 2 34 5 V16 L18 32 Q16 34 14 32 L3 21 Q1 19 3 17 Z" fill="url(#tg)"/>
<circle cx="26" cy="9" r="3.2" fill="none" stroke="#24387a" stroke-width="1.8"/>
</svg>
<svg style="left:2955px;top:181px" width="34" height="34" viewBox="0 0 34 34">
<defs><linearGradient id="ig" x1="0" y1="1" x2="1" y2="0"><stop offset="0" stop-color="#fbb03b"/><stop offset="0.3" stop-color="#f0533a"/><stop offset="0.6" stop-color="#d4237a"/><stop offset="1" stop-color="#8134d9"/></linearGradient></defs>
<rect x="2.5" y="2.5" width="29" height="29" rx="8" fill="none" stroke="url(#ig)" stroke-width="3"/>
<circle cx="17" cy="17" r="7" fill="none" stroke="url(#ig)" stroke-width="3"/>
<circle cx="25.5" cy="8.5" r="2" fill="#c02ec0"/>
</svg>
<svg style="left:2955px;top:264px" width="36" height="30" viewBox="0 0 36 30">
<path d="M1 13 L7 8 L13 14 L7 19 Z" fill="#2f5fb8"/>
<path d="M7 19 L13 14 L28 1 L34 6 L14 26 Q13 27 12 26 Z" fill="#5a9ae6"/>
</svg>
<svg style="left:2955px;top:341px" width="34" height="34" viewBox="0 0 34 34">
<defs><linearGradient id="fg" x1="0" y1="0" x2="0" y2="1"><stop offset="0" stop-color="#4aa6f5"/><stop offset="1" stop-color="#1f61d8"/></linearGradient><clipPath id="fc"><circle cx="17" cy="17" r="16"/></clipPath></defs>
<circle cx="17" cy="17" r="16" fill="url(#fg)"/>
<path clip-path="url(#fc)" d="M14.5 34 V20 H11 V15.5 H14.5 V12 C14.5 8 17 6.5 20.5 6.5 C22 6.5 23.5 6.8 23.5 6.8 V10.8 H21.5 C19.8 10.8 19.3 11.6 19.3 12.8 V15.5 H23.2 L22.5 20 H19.3 V34 Z" fill="#fff"/>
</svg>
<div style="position:absolute;left:2944px;top:422px;width:56px;height:2px;background:#c9c6c2"></div>
<svg style="left:2958px;top:474px" width="26" height="26"><path d="M13 1 V25 M1 13 H25" stroke="#111" stroke-width="1.8"/></svg>
<svg style="left:2768px;top:930px" width="242" height="100" viewBox="0 0 242 100">
<defs>
<radialGradient id="pbase" cx="0.62" cy="0.35" r="0.7"><stop offset="0" stop-color="#f08a60"/><stop offset="0.6" stop-color="#e06a5a"/><stop offset="1" stop-color="#f3a0a0"/></radialGradient>
<radialGradient id="pblue" cx="0.5" cy="0.5" r="0.5"><stop offset="0" stop-color="#3f86a8"/><stop offset="0.55" stop-color="#2c4e70" stop-opacity="0.95"/><stop offset="1" stop-color="#2c4e70" stop-opacity="0"/></radialGradient>
<radialGradient id="ppink" cx="0.5" cy="0.5" r="0.5"><stop offset="0" stop-color="#e050b0"/><stop offset="0.6" stop-color="#b040a0" stop-opacity="0.8"/><stop offset="1" stop-color="#b040a0" stop-opacity="0"/></radialGradient>
<radialGradient id="gal" cx="0.44" cy="0.54" r="0.6"><stop offset="0" stop-color="#6a3a40"/><stop offset="0.45" stop-color="#4a2630"/><stop offset="1" stop-color="#1c0a14"/></radialGradient>
<clipPath id="wc"><path d="M0 0 H230 Q242 0 242 12 V88 Q242 100 230 100 H10 Q0 100 0 90 Z"/></clipPath>
<clipPath id="galc"><rect x="96" y="0" width="146" height="100"/></clipPath><clipPath id="pc"><circle cx="160.6" cy="53.8" r="37"/></clipPath>
</defs>
<g clip-path="url(#wc)">
<rect width="242" height="100" fill="#050207"/>
<rect x="96" width="146" height="100" fill="url(#gal)"/>
<g clip-path="url(#galc)"><path d="M192.4 91.5 A54.6 46.4 0 0 1 174.5 95.1" fill="none" stroke="#f0a080" stroke-width="0.9" opacity="0.54"/><path d="M216.4 23.5 A66.2 56.3 0 0 1 219.0 35.5" fill="none" stroke="#f0a080" stroke-width="0.9" opacity="0.40"/><path d="M121.4 70.9 A44.1 37.5 0 0 1 120.6 56.4" fill="none" stroke="#f0a080" stroke-width="1.6" opacity="0.58"/><path d="M221.9 75.1 A66.2 56.3 0 0 1 207.6 88.5" fill="none" stroke="#f0a080" stroke-width="0.9" opacity="0.59"/><path d="M141.2 118.6 A78.6 66.8 0 0 1 128.7 111.1" fill="none" stroke="#f0a080" stroke-width="1.5" opacity="0.45"/><path d="M217.0 90.0 A70.7 60.1 0 0 1 198.4 100.5" fill="none" stroke="#e07060" stroke-width="1.5" opacity="0.38"/><path d="M200.5 67.1 A42.8 36.4 0 0 1 192.9 72.1" fill="none" stroke="#a06050" stroke-width="1.2" opacity="0.40"/><path d="M97.1 70.2 A66.4 56.4 0 0 1 98.3 56.7" fill="none" stroke="#e07060" stroke-width="1.1" opacity="0.49"/><path d="M95.6 45.0 A65.8 56.0 0 0 1 108.6 25.4" fill="none" stroke="#c05080" stroke-width="2.0" opacity="0.35"/><path d="M121.2 72.8 A45.3 38.5 0 0 1 119.7 58.6" fill="none" stroke="#e07060" stroke-width="1.3" opacity="0.58"/><path d="M234.2 87.0 A83.3 70.8 0 0 1 215.6 102.4" fill="none" stroke="#ffd0c0" stroke-width="1.2" opacity="0.37"/><path d="M178.7 3.1 A62.4 53.0 0 0 1 186.8 9.5" fill="none" stroke="#f0a080" stroke-width="1.4" opacity="0.58"/><path d="M225.5 75.9 A69.9 59.4 0 0 1 209.2 91.6" fill="none" stroke="#a06050" stroke-width="1.8" opacity="0.60"/><path d="M120.8 83.3 A52.8 44.9 0 0 1 115.0 68.7" fill="none" stroke="#f0a080" stroke-width="1.2" opacity="0.58"/><path d="M93.2 56.1 A67.5 57.4 0 0 1 98.1 44.4" fill="none" stroke="#ffd0c0" stroke-width="1.1" opacity="0.30"/><path d="M200.4 18.4 A57.6 49.0 0 0 1 203.8 26.8" fill="none" stroke="#c05080" stroke-width="1.1" opacity="0.39"/><path d="M118.8 70.4 A46.2 39.2 0 0 1 118.7 58.1" fill="none" stroke="#c05080" stroke-width="1.6" opacity="0.60"/><path d="M167.5 102.0 A57.1 48.6 0 0 1 157.7 98.9" fill="none" stroke="#e07060" stroke-width="1.1" opacity="0.33"/><path d="M108.2 25.9 A61.8 52.5 0 0 1 119.9 18.9" fill="none" stroke="#f0a080" stroke-width="1.4" opacity="0.30"/><path d="M132.4 105.9 A67.4 57.3 0 0 1 123.8 97.7" fill="none" stroke="#a06050" stroke-width="1.6" opacity="0.58"/><path d="M90.0 70.6 A73.3 62.3 0 0 1 92.0 45.6" fill="none" stroke="#a06050" stroke-width="1.3" opacity="0.39"/><path d="M130.9 25.4 A44.7 38.0 0 0 1 139.1 24.5" fill="none" stroke="#f0a080" stroke-width="1.3" opacity="0.59"/><path d="M124.4 31.2 A44.9 38.2 0 0 1 132.5 28.5" fill="none" stroke="#a06050" stroke-width="0.9" opacity="0.30"/><path d="M216.2 61.4 A56.4 47.9 0 0 1 204.6 77.9" fill="none" stroke="#a06050" stroke-width="1.6" opacity="0.38"/><path d="M94.2 11.5 A83.0 70.5 0 0 1 113.7 -0.2" fill="none" stroke="#f0a080" stroke-width="2.0" opacity="0.55"/><path d="M99.9 59.1 A61.0 51.8 0 0 1 103.8 50.2" fill="none" stroke="#f0a080" stroke-width="1.7" opacity="0.51"/><path d="M138.7 4.9 A61.5 52.3 0 0 1 157.2 5.0" fill="none" stroke="#e07060" stroke-width="1.4" opacity="0.58"/><path d="M115.7 43.2 A46.6 39.6 0 0 1 121.9 38.7" fill="none" stroke="#a06050" stroke-width="1.6" opacity="0.35"/><path d="M185.5 22.9 A44.1 37.5 0 0 1 192.1 32.8" fill="none" stroke="#e07060" stroke-width="1.1" opacity="0.37"/><path d="M96.2 52.9 A64.4 54.7 0 0 1 104.1 35.8" fill="none" stroke="#a06050" stroke-width="2.0" opacity="0.53"/><path d="M187.6 -8.7 A78.4 66.6 0 0 1 211.2 7.5" fill="none" stroke="#e07060" stroke-width="1.4" opacity="0.32"/><path d="M233.3 49.8 A72.9 62.0 0 0 1 226.0 72.3" fill="none" stroke="#c05080" stroke-width="1.6" opacity="0.34"/><path d="M82.1 76.8 A83.0 70.6 0 0 1 81.9 47.1" fill="none" stroke="#ffd0c0" stroke-width="1.2" opacity="0.58"/><path d="M167.8 95.8 A49.9 42.4 0 0 1 157.7 92.8" fill="none" stroke="#e07060" stroke-width="2.0" opacity="0.42"/><path d="M228.1 54.5 A67.5 57.3 0 0 1 218.2 76.5" fill="none" stroke="#ffd0c0" stroke-width="0.9" opacity="0.53"/><path d="M219.4 22.0 A69.7 59.3 0 0 1 225.2 43.7" fill="none" stroke="#e07060" stroke-width="1.0" opacity="0.42"/><path d="M123.2 109.5 A75.5 64.2 0 0 1 104.2 91.2" fill="none" stroke="#c05080" stroke-width="1.7" opacity="0.41"/><path d="M184.3 85.1 A43.8 37.2 0 0 1 165.6 87.4" fill="none" stroke="#f0a080" stroke-width="1.9" opacity="0.30"/><path d="M206.9 105.3 A76.3 64.8 0 0 1 178.8 113.3" fill="none" stroke="#c05080" stroke-width="1.2" opacity="0.48"/><path d="M204.6 94.1 A64.7 55.0 0 0 1 194.5 96.6" fill="none" stroke="#f0a080" stroke-width="1.9" opacity="0.43"/><path d="M201.8 17.3 A59.5 50.6 0 0 1 211.6 35.1" fill="none" stroke="#e07060" stroke-width="1.1" opacity="0.26"/><path d="M166.0 0.8 A62.6 53.2 0 0 1 179.8 6.8" fill="none" stroke="#a06050" stroke-width="1.0" opacity="0.40"/><path d="M111.5 108.5 A81.0 68.8 0 0 1 98.5 92.4" fill="none" stroke="#a06050" stroke-width="1.4" opacity="0.54"/><path d="M216.3 8.3 A77.2 65.6 0 0 1 222.0 19.9" fill="none" stroke="#e07060" stroke-width="0.8" opacity="0.43"/><path d="M185.0 100.2 A59.8 50.8 0 0 1 175.4 99.5" fill="none" stroke="#e07060" stroke-width="1.4" opacity="0.31"/><path d="M92.5 32.3 A72.6 61.7 0 0 1 104.1 20.7" fill="none" stroke="#a06050" stroke-width="1.4" opacity="0.44"/><path d="M216.3 11.1 A74.9 63.7 0 0 1 220.5 21.4" fill="none" stroke="#e07060" stroke-width="1.7" opacity="0.35"/><path d="M102.4 33.6 A62.8 53.4 0 0 1 118.2 19.1" fill="none" stroke="#f0a080" stroke-width="1.5" opacity="0.41"/><path d="M98.0 49.7 A62.7 53.3 0 0 1 107.3 32.8" fill="none" stroke="#c05080" stroke-width="1.8" opacity="0.43"/><path d="M161.5 107.2 A62.8 53.4 0 0 1 143.6 101.7" fill="none" stroke="#ffd0c0" stroke-width="1.9" opacity="0.57"/><path d="M114.1 67.3 A49.1 41.7 0 0 1 115.6 55.9" fill="none" stroke="#c05080" stroke-width="0.9" opacity="0.40"/><path d="M206.2 73.0 A50.8 43.2 0 0 1 192.9 82.6" fill="none" stroke="#f0a080" stroke-width="1.0" opacity="0.56"/><path d="M122.0 1.9 A72.2 61.4 0 0 1 135.9 -0.2" fill="none" stroke="#e07060" stroke-width="1.1" opacity="0.59"/><path d="M94.1 95.8 A82.9 70.4 0 0 1 86.3 76.4" fill="none" stroke="#e07060" stroke-width="1.3" opacity="0.31"/><path d="M127.0 99.3 A63.2 53.7 0 0 1 119.4 90.0" fill="none" stroke="#ffd0c0" stroke-width="1.2" opacity="0.28"/><path d="M107.2 65.8 A55.2 46.9 0 0 1 109.7 49.4" fill="none" stroke="#c05080" stroke-width="1.5" opacity="0.37"/><path d="M218.6 74.9 A63.1 53.6 0 0 1 199.6 91.5" fill="none" stroke="#e07060" stroke-width="0.9" opacity="0.59"/><path d="M211.0 64.7 A52.0 44.2 0 0 1 199.3 77.9" fill="none" stroke="#ffd0c0" stroke-width="1.8" opacity="0.51"/><path d="M125.5 -5.6 A78.2 66.5 0 0 1 158.3 -9.3" fill="none" stroke="#c05080" stroke-width="1.9" opacity="0.30"/><path d="M140.5 0.7 A65.7 55.8 0 0 1 152.3 1.8" fill="none" stroke="#f0a080" stroke-width="1.0" opacity="0.53"/></g><circle cx="160.6" cy="53.8" r="39.5" fill="none" stroke="#a05060" stroke-width="3" opacity="0.3"/>
<g clip-path="url(#pc)">
<rect x="120" y="14" width="82" height="80" fill="url(#pbase)"/>
<ellipse cx="154" cy="57" rx="34" ry="31" fill="url(#pblue)"/>
<ellipse cx="163" cy="86" rx="22" ry="14" fill="url(#ppink)"/>
</g>
<circle cx="160.6" cy="53.8" r="36.5" fill="none" stroke="#f090c0" stroke-width="1.5" opacity="0.7"/>
<path d="M34 18 H40 V16 H44 V19 H48 V16 H52 V18 H58 V24 H54 V38 H38 V24 H34 Z" fill="#6ab0c4"/>
<rect x="9" y="20" width="3" height="4" fill="#6a3a8a"/>
<text x="11" y="79" font-family="'Liberation Sans',sans-serif" font-size="27" font-weight="700" fill="#c8447c">中</text>
<text x="55" y="80" font-family="'Liberation Sans',sans-serif" font-size="27" font-weight="700" fill="#c8447c">簡</text>
</g></svg>
</body></html>
